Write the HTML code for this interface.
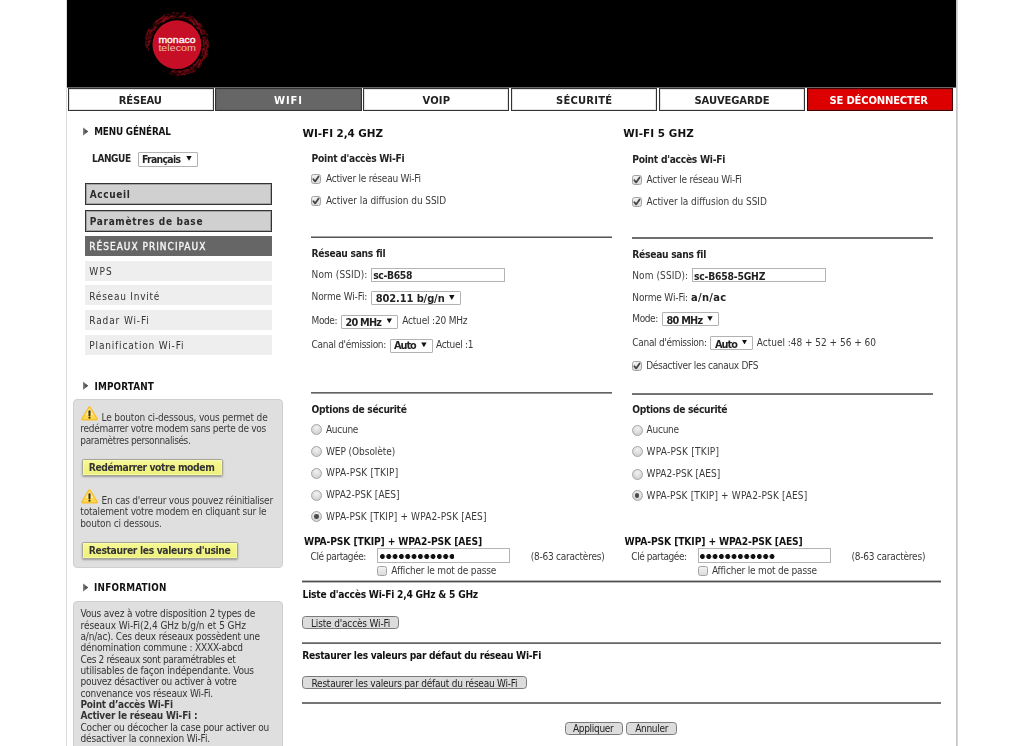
<!DOCTYPE html>
<html lang="fr">
<head>
<meta charset="utf-8">
<title>Monaco Telecom - WiFi</title>
<style>
html,body{margin:0;padding:0;background:#fff;}
body{width:1024px;height:746px;overflow:hidden;position:relative;font-family:'DejaVu Sans Condensed','Liberation Sans',sans-serif;font-size:10px;color:#333;}
#wrap{filter:blur(0.3px);position:absolute;left:0;top:0;width:1024px;height:746px;overflow:hidden;}
.abs,.t,.tab,.mi,.hr,.cb,.rd,.inp,.sel,.btn,.ybtn,.box,.tri,.warn{position:absolute;box-sizing:border-box;}
.t{display:block;height:14px;margin:0;padding:0;}
.semi{-webkit-text-stroke:0.35px #f6f6f6;}
#lborder{left:66px;top:0;width:1px;height:746px;background:#dcdcdc;}
#rborder{left:956px;top:0;width:2px;height:746px;background:linear-gradient(90deg,#c6c6c6 50%,#d6d6d6 50%);}
#header{left:67px;top:0;width:889px;height:87px;background:#000;}
#hline{left:67px;top:87px;width:889px;height:1px;background:#6a6a6a;}
.tab{top:88px;height:23px;width:146px;border:1px solid #333;background:#fff;box-shadow:inset 0 0 0 1px rgba(60,60,60,.14);}
.tab.on{background:#666;}
.tab.red{background:#dc0000;border-color:#400;}
.mi{left:85px;width:187px;height:22px;}
.mi.dark{background:#d0d0d0;border:1px solid #333;box-shadow:inset 0 0 0 1px rgba(60,60,60,.3);}
.mi.cur{background:#666;height:20px;}
.mi.lite{background:#eee;height:20px;}
.tri{width:5.6px;height:9px;left:82.6px;background:linear-gradient(90deg,#858585,#2e2e2e);clip-path:polygon(0 0,100% 50%,0 100%);}
.box{left:73px;width:210px;background:#dfdfdf;border:1px solid #cfcfcf;border-radius:4px;}
.ybtn{height:17px;background:linear-gradient(#f6f894,#eef07c);border:1px solid #a6a698;box-shadow:0 1px 2px rgba(0,0,0,.3),inset 0 0 0 1px rgba(255,255,200,.5);border-radius:1.5px;}
.hr{height:2px;}
.cb{width:10px;height:10px;border:1px solid #a2a2a2;border-radius:2.5px;background:linear-gradient(#f2f2f2,#dcdcdc);}
.cb.sm{width:10px;height:10px;}
.cb svg{position:absolute;left:0;top:0;width:8px;height:8px;}
.rd{width:11px;height:11px;border:1px solid #a4a4a4;border-radius:50%;background:radial-gradient(circle at 50% 30%,#f2f2f2,#c9c9c9);}
.rd.on:after{content:"";position:absolute;left:2.2px;top:2.2px;width:4.6px;height:4.6px;border-radius:50%;background:#4a4a4a;}
.inp{height:14px;background:#fff;border:1px solid #b4b4b4;}
.sel{height:14px;background:#fff;border:1px solid #b2b2b2;border-radius:1px;}
.sel:after{content:"";position:absolute;right:5.3px;top:2.9px;width:5.4px;height:4.8px;background:#111;clip-path:polygon(0 0,100% 0,50% 100%);}
.btn{height:13px;background:#dcdcdc;border:1px solid #7a7a7a;border-radius:3.5px;}
.dots{position:absolute;left:1.6px;top:4.6px;height:5px;width:74.7px;background:radial-gradient(circle at 2.5px 2.5px,#111 2.2px,rgba(0,0,0,0) 2.7px);background-size:6.34px 5px;}
</style>
</head>
<body>
<div id="wrap">
<div class="abs" id="lborder"></div>
<div class="abs" id="rborder"></div>
<div class="abs" id="header">
<svg class="abs" style="left:0;top:0" width="220" height="87" viewBox="0 0 220 87"><path d="M81.5 45.7 A28.4 28.4 0 1 1 105.9 72.8" fill="none" stroke="#6a0a13" stroke-width="3.0" stroke-opacity="0.36" stroke-dasharray="3 1.5 5 2 2 1 7 2"/><path d="M79.4 45.8 A30.5 30.5 0 1 1 105.7 74.9" fill="none" stroke="#6a0a13" stroke-width="1.8" stroke-opacity="0.26" stroke-dasharray="2 2 4 1.5 6 3 1.5 1"/><path d="M82.9 45.6 A27.0 27.0 0 1 1 106.1 71.4" fill="none" stroke="#6a0a13" stroke-width="1.0" stroke-opacity="0.3" stroke-dasharray="4 2 3 1.5"/><path d="M135.7 31.4 A29.0 29.0 0 0 1 136.2 34.5" fill="none" stroke="#7a0b15" stroke-width="1.1" stroke-opacity="0.71" stroke-linecap="round"/><path d="M131.9 59.5 A26.5 26.5 0 0 1 130.1 62.7" fill="none" stroke="#5e0910" stroke-width="0.6" stroke-opacity="0.89" stroke-linecap="round"/><path d="M94.6 22.5 A26.9 26.9 0 0 1 95.3 22.0" fill="none" stroke="#7a0b15" stroke-width="0.7" stroke-opacity="0.50" stroke-linecap="round"/><path d="M87.2 28.3 A28.0 28.0 0 0 1 89.8 26.6" fill="none" stroke="#8a0c18" stroke-width="0.8" stroke-opacity="0.55" stroke-linecap="round"/><path d="M95.4 21.1 A27.7 27.7 0 0 1 98.8 17.8" fill="none" stroke="#9a0f1c" stroke-width="1.4" stroke-opacity="0.75" stroke-linecap="round"/><path d="M111.2 18.6 A26.2 26.2 0 0 1 113.7 19.9" fill="none" stroke="#8a0c18" stroke-width="0.7" stroke-opacity="0.55" stroke-linecap="round"/><path d="M135.0 37.9 A26.0 26.0 0 0 1 136.5 39.1" fill="none" stroke="#5e0910" stroke-width="1.0" stroke-opacity="0.89" stroke-linecap="round"/><path d="M118.8 71.3 A28.0 28.0 0 0 1 116.6 70.5" fill="none" stroke="#7a0b15" stroke-width="1.0" stroke-opacity="0.86" stroke-linecap="round"/><path d="M110.5 71.1 A26.4 26.4 0 0 1 107.1 70.0" fill="none" stroke="#7a0b15" stroke-width="1.1" stroke-opacity="0.62" stroke-linecap="round"/><path d="M138.3 42.1 A28.5 28.5 0 0 1 138.1 44.3" fill="none" stroke="#9a0f1c" stroke-width="1.5" stroke-opacity="0.40" stroke-linecap="round"/><path d="M137.0 44.3 A27.1 27.1 0 0 1 137.0 48.7" fill="none" stroke="#7a0b15" stroke-width="1.1" stroke-opacity="0.42" stroke-linecap="round"/><path d="M116.9 74.5 A30.6 30.6 0 0 1 114.6 74.4" fill="none" stroke="#7a0b15" stroke-width="0.7" stroke-opacity="0.45" stroke-linecap="round"/><path d="M139.5 47.6 A29.7 29.7 0 0 1 139.6 49.0" fill="none" stroke="#5e0910" stroke-width="1.3" stroke-opacity="0.47" stroke-linecap="round"/><path d="M122.8 73.4 A31.5 31.5 0 0 1 118.6 74.2" fill="none" stroke="#7a0b15" stroke-width="0.8" stroke-opacity="0.77" stroke-linecap="round"/><path d="M98.8 18.0 A28.9 28.9 0 0 1 100.3 18.8" fill="none" stroke="#9a0f1c" stroke-width="0.7" stroke-opacity="0.66" stroke-linecap="round"/><path d="M87.7 29.3 A27.1 27.1 0 0 1 90.6 27.5" fill="none" stroke="#8a0c18" stroke-width="0.8" stroke-opacity="0.68" stroke-linecap="round"/><path d="M117.8 71.2 A27.6 27.6 0 0 1 115.2 70.6" fill="none" stroke="#7a0b15" stroke-width="0.8" stroke-opacity="0.58" stroke-linecap="round"/><path d="M133.9 60.4 A28.7 28.7 0 0 1 133.2 62.5" fill="none" stroke="#8a0c18" stroke-width="1.1" stroke-opacity="0.87" stroke-linecap="round"/><path d="M134.9 31.7 A28.1 28.1 0 0 1 134.5 34.0" fill="none" stroke="#8a0c18" stroke-width="1.1" stroke-opacity="0.44" stroke-linecap="round"/><path d="M106.0 12.9 A32.0 32.0 0 0 1 107.2 12.7" fill="none" stroke="#7a0b15" stroke-width="1.3" stroke-opacity="0.85" stroke-linecap="round"/><path d="M117.4 17.6 A28.1 28.1 0 0 1 121.0 17.7" fill="none" stroke="#8a0c18" stroke-width="1.4" stroke-opacity="0.61" stroke-linecap="round"/><path d="M129.4 22.2 A29.7 29.7 0 0 1 131.3 23.7" fill="none" stroke="#8a0c18" stroke-width="1.1" stroke-opacity="0.44" stroke-linecap="round"/><path d="M140.2 43.4 A30.4 30.4 0 0 1 140.9 45.9" fill="none" stroke="#8a0c18" stroke-width="1.1" stroke-opacity="0.62" stroke-linecap="round"/><path d="M82.2 41.4 A27.9 27.9 0 0 1 83.7 40.5" fill="none" stroke="#5e0910" stroke-width="1.5" stroke-opacity="0.46" stroke-linecap="round"/><path d="M108.9 72.5 A27.8 27.8 0 0 1 105.7 71.4" fill="none" stroke="#5e0910" stroke-width="0.8" stroke-opacity="0.85" stroke-linecap="round"/><path d="M81.5 45.0 A28.4 28.4 0 0 1 81.1 43.2" fill="none" stroke="#7a0b15" stroke-width="1.3" stroke-opacity="0.78" stroke-linecap="round"/><path d="M131.4 24.5 A29.5 29.5 0 0 1 132.0 26.8" fill="none" stroke="#8a0c18" stroke-width="1.0" stroke-opacity="0.82" stroke-linecap="round"/><path d="M103.2 17.9 A27.7 27.7 0 0 1 104.7 17.7" fill="none" stroke="#5e0910" stroke-width="0.8" stroke-opacity="0.51" stroke-linecap="round"/><path d="M95.3 17.3 A31.1 31.1 0 0 1 98.6 16.3" fill="none" stroke="#8a0c18" stroke-width="1.3" stroke-opacity="0.54" stroke-linecap="round"/><path d="M97.6 19.4 A28.1 28.1 0 0 1 100.6 18.0" fill="none" stroke="#7a0b15" stroke-width="1.2" stroke-opacity="0.60" stroke-linecap="round"/><path d="M137.0 48.9 A27.4 27.4 0 0 1 135.5 50.0" fill="none" stroke="#9a0f1c" stroke-width="1.2" stroke-opacity="0.62" stroke-linecap="round"/><path d="M136.2 37.7 A27.2 27.2 0 0 1 135.8 40.3" fill="none" stroke="#8a0c18" stroke-width="0.6" stroke-opacity="0.64" stroke-linecap="round"/><path d="M122.0 70.0 A28.1 28.1 0 0 1 118.9 71.4" fill="none" stroke="#5e0910" stroke-width="1.2" stroke-opacity="0.78" stroke-linecap="round"/><path d="M125.8 22.5 A27.3 27.3 0 0 1 128.3 23.0" fill="none" stroke="#7a0b15" stroke-width="0.9" stroke-opacity="0.63" stroke-linecap="round"/><path d="M90.0 24.6 A28.3 28.3 0 0 1 91.5 21.9" fill="none" stroke="#5e0910" stroke-width="1.3" stroke-opacity="0.87" stroke-linecap="round"/><path d="M134.9 62.6 A30.8 30.8 0 0 1 131.2 65.4" fill="none" stroke="#8a0c18" stroke-width="0.8" stroke-opacity="0.60" stroke-linecap="round"/><path d="M140.3 40.3 A30.7 30.7 0 0 1 141.7 42.4" fill="none" stroke="#8a0c18" stroke-width="1.4" stroke-opacity="0.57" stroke-linecap="round"/><path d="M137.7 51.3 A28.5 28.5 0 0 1 138.3 53.5" fill="none" stroke="#5e0910" stroke-width="0.8" stroke-opacity="0.83" stroke-linecap="round"/><path d="M118.5 18.1 A28.0 28.0 0 0 1 121.5 20.3" fill="none" stroke="#5e0910" stroke-width="0.7" stroke-opacity="0.66" stroke-linecap="round"/><path d="M139.8 34.1 A31.7 31.7 0 0 1 139.4 35.6" fill="none" stroke="#7a0b15" stroke-width="1.1" stroke-opacity="0.55" stroke-linecap="round"/><path d="M83.6 34.3 A28.3 28.3 0 0 1 84.3 30.2" fill="none" stroke="#9a0f1c" stroke-width="0.8" stroke-opacity="0.83" stroke-linecap="round"/><path d="M83.7 31.8 A29.2 29.2 0 0 1 84.8 29.2" fill="none" stroke="#5e0910" stroke-width="0.6" stroke-opacity="0.88" stroke-linecap="round"/><path d="M129.4 63.4 A27.0 27.0 0 0 1 126.2 66.0" fill="none" stroke="#5e0910" stroke-width="1.4" stroke-opacity="0.80" stroke-linecap="round"/><path d="M106.7 71.3 A26.8 26.8 0 0 1 104.2 71.8" fill="none" stroke="#9a0f1c" stroke-width="1.4" stroke-opacity="0.64" stroke-linecap="round"/><path d="M130.2 61.2 A26.2 26.2 0 0 1 129.5 62.9" fill="none" stroke="#7a0b15" stroke-width="1.5" stroke-opacity="0.42" stroke-linecap="round"/><path d="M113.9 72.3 A27.9 27.9 0 0 1 111.8 72.9" fill="none" stroke="#8a0c18" stroke-width="0.7" stroke-opacity="0.77" stroke-linecap="round"/><path d="M128.0 20.4 A30.3 30.3 0 0 1 131.5 22.0" fill="none" stroke="#7a0b15" stroke-width="0.6" stroke-opacity="0.72" stroke-linecap="round"/><path d="M83.2 38.9 A27.3 27.3 0 0 1 83.7 36.2" fill="none" stroke="#9a0f1c" stroke-width="0.7" stroke-opacity="0.86" stroke-linecap="round"/><path d="M132.7 28.7 A27.9 27.9 0 0 1 134.2 32.6" fill="none" stroke="#7a0b15" stroke-width="1.5" stroke-opacity="0.84" stroke-linecap="round"/><path d="M130.2 27.7 A26.5 26.5 0 0 1 131.4 29.5" fill="none" stroke="#7a0b15" stroke-width="1.4" stroke-opacity="0.67" stroke-linecap="round"/><path d="M119.3 74.0 A30.8 30.8 0 0 1 118.1 74.6" fill="none" stroke="#9a0f1c" stroke-width="0.9" stroke-opacity="0.81" stroke-linecap="round"/><path d="M132.8 65.0 A30.5 30.5 0 0 1 131.1 67.4" fill="none" stroke="#8a0c18" stroke-width="0.8" stroke-opacity="0.44" stroke-linecap="round"/><path d="M139.2 49.2 A29.7 29.7 0 0 1 138.2 53.5" fill="none" stroke="#7a0b15" stroke-width="0.8" stroke-opacity="0.46" stroke-linecap="round"/><path d="M126.8 18.1 A31.6 31.6 0 0 1 127.3 19.8" fill="none" stroke="#8a0c18" stroke-width="1.5" stroke-opacity="0.63" stroke-linecap="round"/><path d="M80.4 41.9 A29.6 29.6 0 0 1 80.0 40.9" fill="none" stroke="#5e0910" stroke-width="1.4" stroke-opacity="0.49" stroke-linecap="round"/><path d="M133.3 32.2 A26.6 26.6 0 0 1 134.3 35.6" fill="none" stroke="#5e0910" stroke-width="0.7" stroke-opacity="0.82" stroke-linecap="round"/><path d="M83.2 32.2 A29.5 29.5 0 0 1 83.5 29.9" fill="none" stroke="#7a0b15" stroke-width="0.9" stroke-opacity="0.46" stroke-linecap="round"/><path d="M122.3 15.9 A31.4 31.4 0 0 1 126.6 17.5" fill="none" stroke="#5e0910" stroke-width="1.3" stroke-opacity="0.78" stroke-linecap="round"/><path d="M118.1 74.4 A30.8 30.8 0 0 1 115.9 73.8" fill="none" stroke="#8a0c18" stroke-width="1.4" stroke-opacity="0.90" stroke-linecap="round"/><path d="M113.3 74.5 A30.0 30.0 0 0 1 111.1 75.1" fill="none" stroke="#5e0910" stroke-width="1.1" stroke-opacity="0.67" stroke-linecap="round"/><path d="M82.7 42.2 A27.3 27.3 0 0 1 83.2 41.0" fill="none" stroke="#8a0c18" stroke-width="1.1" stroke-opacity="0.46" stroke-linecap="round"/><path d="M107.9 16.4 A28.4 28.4 0 0 1 109.0 17.2" fill="none" stroke="#9a0f1c" stroke-width="0.9" stroke-opacity="0.45" stroke-linecap="round"/><path d="M105.2 73.6 A29.2 29.2 0 0 1 102.8 73.1" fill="none" stroke="#5e0910" stroke-width="1.4" stroke-opacity="0.45" stroke-linecap="round"/><path d="M120.7 17.2 A29.6 29.6 0 0 1 123.5 19.9" fill="none" stroke="#5e0910" stroke-width="1.4" stroke-opacity="0.48" stroke-linecap="round"/><path d="M138.6 39.2 A29.3 29.3 0 0 1 138.9 42.4" fill="none" stroke="#5e0910" stroke-width="1.0" stroke-opacity="0.54" stroke-linecap="round"/><path d="M87.3 28.7 A27.7 27.7 0 0 1 89.1 26.1" fill="none" stroke="#9a0f1c" stroke-width="0.9" stroke-opacity="0.76" stroke-linecap="round"/><path d="M139.0 49.7 A29.5 29.5 0 0 1 138.0 52.8" fill="none" stroke="#9a0f1c" stroke-width="1.2" stroke-opacity="0.43" stroke-linecap="round"/><path d="M109.6 12.8 A31.9 31.9 0 0 1 114.3 14.3" fill="none" stroke="#5e0910" stroke-width="1.4" stroke-opacity="0.61" stroke-linecap="round"/><path d="M139.5 53.4 A30.9 30.9 0 0 1 137.0 57.3" fill="none" stroke="#8a0c18" stroke-width="1.5" stroke-opacity="0.52" stroke-linecap="round"/><path d="M135.3 53.0 A26.7 26.7 0 0 1 133.5 56.3" fill="none" stroke="#7a0b15" stroke-width="0.7" stroke-opacity="0.58" stroke-linecap="round"/><path d="M96.3 20.7 A27.6 27.6 0 0 1 99.0 19.6" fill="none" stroke="#7a0b15" stroke-width="1.3" stroke-opacity="0.67" stroke-linecap="round"/><path d="M136.1 36.7 A27.4 27.4 0 0 1 137.5 37.6" fill="none" stroke="#9a0f1c" stroke-width="1.3" stroke-opacity="0.71" stroke-linecap="round"/><path d="M105.2 74.7 A30.4 30.4 0 0 1 101.9 73.1" fill="none" stroke="#7a0b15" stroke-width="0.9" stroke-opacity="0.52" stroke-linecap="round"/><path d="M119.8 72.8 A29.8 29.8 0 0 1 118.7 72.4" fill="none" stroke="#7a0b15" stroke-width="0.6" stroke-opacity="0.42" stroke-linecap="round"/><path d="M84.3 37.8 A26.5 26.5 0 0 1 85.1 34.8" fill="none" stroke="#5e0910" stroke-width="1.2" stroke-opacity="0.59" stroke-linecap="round"/><path d="M78.7 45.8 A31.2 31.2 0 0 1 79.0 41.6" fill="none" stroke="#7a0b15" stroke-width="1.3" stroke-opacity="0.82" stroke-linecap="round"/><path d="M126.8 69.0 A29.6 29.6 0 0 1 125.4 70.7" fill="none" stroke="#9a0f1c" stroke-width="1.3" stroke-opacity="0.49" stroke-linecap="round"/><path d="M85.5 31.1 A27.9 27.9 0 0 1 87.1 28.9" fill="none" stroke="#5e0910" stroke-width="1.1" stroke-opacity="0.81" stroke-linecap="round"/><path d="M136.5 58.5 A30.0 30.0 0 0 1 135.5 59.3" fill="none" stroke="#9a0f1c" stroke-width="1.3" stroke-opacity="0.75" stroke-linecap="round"/><path d="M131.9 24.4 A29.9 29.9 0 0 1 134.2 25.4" fill="none" stroke="#9a0f1c" stroke-width="0.9" stroke-opacity="0.62" stroke-linecap="round"/><path d="M132.1 27.4 A28.2 28.2 0 0 1 133.1 29.4" fill="none" stroke="#7a0b15" stroke-width="1.0" stroke-opacity="0.59" stroke-linecap="round"/><path d="M107.9 16.4 A28.3 28.3 0 0 1 109.3 16.1" fill="none" stroke="#5e0910" stroke-width="0.8" stroke-opacity="0.44" stroke-linecap="round"/><path d="M129.1 26.9 A26.1 26.1 0 0 1 130.8 28.8" fill="none" stroke="#5e0910" stroke-width="1.1" stroke-opacity="0.88" stroke-linecap="round"/><path d="M138.2 56.7 A30.7 30.7 0 0 1 136.6 57.4" fill="none" stroke="#8a0c18" stroke-width="1.3" stroke-opacity="0.85" stroke-linecap="round"/><path d="M136.1 49.0 A26.6 26.6 0 0 1 135.1 52.5" fill="none" stroke="#9a0f1c" stroke-width="1.2" stroke-opacity="0.64" stroke-linecap="round"/><path d="M112.5 16.8 A28.0 28.0 0 0 1 116.9 17.1" fill="none" stroke="#8a0c18" stroke-width="1.0" stroke-opacity="0.67" stroke-linecap="round"/><path d="M102.5 17.2 A28.5 28.5 0 0 1 106.3 16.0" fill="none" stroke="#8a0c18" stroke-width="1.4" stroke-opacity="0.80" stroke-linecap="round"/><path d="M132.7 25.5 A29.8 29.8 0 0 1 135.0 27.5" fill="none" stroke="#5e0910" stroke-width="1.3" stroke-opacity="0.61" stroke-linecap="round"/><path d="M133.2 31.1 A27.0 27.0 0 0 1 135.0 33.5" fill="none" stroke="#9a0f1c" stroke-width="0.9" stroke-opacity="0.59" stroke-linecap="round"/><path d="M136.6 30.0 A30.5 30.5 0 0 1 137.0 30.8" fill="none" stroke="#7a0b15" stroke-width="1.3" stroke-opacity="0.56" stroke-linecap="round"/><path d="M120.9 69.8 A27.4 27.4 0 0 1 117.8 71.2" fill="none" stroke="#9a0f1c" stroke-width="0.8" stroke-opacity="0.49" stroke-linecap="round"/><path d="M139.1 32.6 A31.7 31.7 0 0 1 141.2 35.3" fill="none" stroke="#9a0f1c" stroke-width="1.0" stroke-opacity="0.60" stroke-linecap="round"/><path d="M95.7 22.3 A26.6 26.6 0 0 1 99.1 20.7" fill="none" stroke="#5e0910" stroke-width="0.8" stroke-opacity="0.47" stroke-linecap="round"/><path d="M140.2 40.1 A30.6 30.6 0 0 1 139.3 44.2" fill="none" stroke="#5e0910" stroke-width="1.4" stroke-opacity="0.85" stroke-linecap="round"/><path d="M132.6 29.3 A27.5 27.5 0 0 1 134.8 30.8" fill="none" stroke="#7a0b15" stroke-width="1.0" stroke-opacity="0.79" stroke-linecap="round"/><path d="M139.1 43.4 A29.2 29.2 0 0 1 139.9 44.9" fill="none" stroke="#7a0b15" stroke-width="0.6" stroke-opacity="0.81" stroke-linecap="round"/><path d="M122.0 19.9 A27.6 27.6 0 0 1 124.3 22.5" fill="none" stroke="#9a0f1c" stroke-width="1.0" stroke-opacity="0.63" stroke-linecap="round"/><path d="M136.9 47.9 A27.2 27.2 0 0 1 137.1 51.3" fill="none" stroke="#5e0910" stroke-width="1.0" stroke-opacity="0.42" stroke-linecap="round"/><path d="M79.3 39.7 A31.0 31.0 0 0 1 80.3 37.7" fill="none" stroke="#5e0910" stroke-width="0.7" stroke-opacity="0.55" stroke-linecap="round"/><path d="M96.7 21.8 A26.4 26.4 0 0 1 97.7 20.7" fill="none" stroke="#8a0c18" stroke-width="1.2" stroke-opacity="0.77" stroke-linecap="round"/><path d="M93.9 21.4 A28.3 28.3 0 0 1 97.2 20.3" fill="none" stroke="#8a0c18" stroke-width="1.1" stroke-opacity="0.63" stroke-linecap="round"/><path d="M128.6 20.9 A30.3 30.3 0 0 1 131.2 24.5" fill="none" stroke="#9a0f1c" stroke-width="1.2" stroke-opacity="0.87" stroke-linecap="round"/><path d="M138.0 36.4 A29.3 29.3 0 0 1 137.5 37.7" fill="none" stroke="#9a0f1c" stroke-width="0.9" stroke-opacity="0.45" stroke-linecap="round"/><path d="M138.5 34.4 A30.3 30.3 0 0 1 140.0 36.3" fill="none" stroke="#8a0c18" stroke-width="0.7" stroke-opacity="0.47" stroke-linecap="round"/><path d="M128.3 64.6 A27.1 27.1 0 0 1 126.3 64.6" fill="none" stroke="#8a0c18" stroke-width="1.0" stroke-opacity="0.75" stroke-linecap="round"/><path d="M113.8 71.2 A26.7 26.7 0 0 1 111.5 70.2" fill="none" stroke="#7a0b15" stroke-width="1.4" stroke-opacity="0.61" stroke-linecap="round"/><path d="M91.3 20.0 A30.9 30.9 0 0 1 93.6 19.0" fill="none" stroke="#5e0910" stroke-width="1.0" stroke-opacity="0.41" stroke-linecap="round"/><path d="M86.6 24.7 A30.7 30.7 0 0 1 86.9 22.3" fill="none" stroke="#7a0b15" stroke-width="1.1" stroke-opacity="0.53" stroke-linecap="round"/><path d="M132.7 62.7 A29.1 29.1 0 0 1 130.8 66.2" fill="none" stroke="#9a0f1c" stroke-width="1.2" stroke-opacity="0.48" stroke-linecap="round"/><path d="M82.2 36.0 A29.0 29.0 0 0 1 82.1 34.5" fill="none" stroke="#7a0b15" stroke-width="1.5" stroke-opacity="0.66" stroke-linecap="round"/><path d="M82.6 32.4 A30.0 30.0 0 0 1 85.3 29.5" fill="none" stroke="#9a0f1c" stroke-width="1.0" stroke-opacity="0.61" stroke-linecap="round"/><path d="M129.0 63.5 A26.8 26.8 0 0 1 126.1 66.2" fill="none" stroke="#9a0f1c" stroke-width="1.1" stroke-opacity="0.68" stroke-linecap="round"/><path d="M125.3 72.1 A31.4 31.4 0 0 1 122.8 72.2" fill="none" stroke="#9a0f1c" stroke-width="1.4" stroke-opacity="0.40" stroke-linecap="round"/><path d="M111.7 75.6 A31.0 31.0 0 0 1 110.0 75.8" fill="none" stroke="#7a0b15" stroke-width="0.7" stroke-opacity="0.42" stroke-linecap="round"/><path d="M116.4 13.4 A32.0 32.0 0 0 1 118.1 13.0" fill="none" stroke="#8a0c18" stroke-width="1.4" stroke-opacity="0.85" stroke-linecap="round"/><path d="M124.1 66.7 A26.2 26.2 0 0 1 121.4 67.0" fill="none" stroke="#7a0b15" stroke-width="1.0" stroke-opacity="0.57" stroke-linecap="round"/><path d="M107.5 72.6 A28.0 28.0 0 0 1 104.6 70.9" fill="none" stroke="#5e0910" stroke-width="1.2" stroke-opacity="0.47" stroke-linecap="round"/><path d="M86.9 28.0 A28.5 28.5 0 0 1 88.5 25.1" fill="none" stroke="#5e0910" stroke-width="1.3" stroke-opacity="0.78" stroke-linecap="round"/><path d="M134.0 24.5 A31.4 31.4 0 0 1 137.0 27.1" fill="none" stroke="#9a0f1c" stroke-width="0.7" stroke-opacity="0.46" stroke-linecap="round"/><path d="M78.9 39.8 A31.4 31.4 0 0 1 80.5 37.9" fill="none" stroke="#5e0910" stroke-width="1.3" stroke-opacity="0.85" stroke-linecap="round"/><path d="M87.1 28.7 A27.8 27.8 0 0 1 89.9 27.1" fill="none" stroke="#5e0910" stroke-width="0.7" stroke-opacity="0.62" stroke-linecap="round"/><path d="M136.1 40.1 A26.6 26.6 0 0 1 136.7 44.1" fill="none" stroke="#8a0c18" stroke-width="1.2" stroke-opacity="0.87" stroke-linecap="round"/><path d="M141.1 44.6 A31.2 31.2 0 0 1 141.2 47.0" fill="none" stroke="#5e0910" stroke-width="1.1" stroke-opacity="0.48" stroke-linecap="round"/><path d="M131.7 60.2 A26.7 26.7 0 0 1 131.0 63.1" fill="none" stroke="#9a0f1c" stroke-width="0.6" stroke-opacity="0.52" stroke-linecap="round"/><path d="M138.2 49.0 A28.6 28.6 0 0 1 137.8 51.5" fill="none" stroke="#7a0b15" stroke-width="0.7" stroke-opacity="0.75" stroke-linecap="round"/><path d="M140.0 53.6 A31.4 31.4 0 0 1 139.3 55.7" fill="none" stroke="#5e0910" stroke-width="1.4" stroke-opacity="0.89" stroke-linecap="round"/><path d="M132.4 23.2 A31.2 31.2 0 0 1 133.9 26.8" fill="none" stroke="#5e0910" stroke-width="0.9" stroke-opacity="0.83" stroke-linecap="round"/><path d="M139.9 47.7 A30.2 30.2 0 0 1 139.6 50.8" fill="none" stroke="#8a0c18" stroke-width="0.8" stroke-opacity="0.87" stroke-linecap="round"/><path d="M91.8 19.7 A30.9 30.9 0 0 1 96.1 17.7" fill="none" stroke="#9a0f1c" stroke-width="1.0" stroke-opacity="0.84" stroke-linecap="round"/><path d="M100.3 17.7 A28.7 28.7 0 0 1 101.7 18.0" fill="none" stroke="#7a0b15" stroke-width="0.9" stroke-opacity="0.76" stroke-linecap="round"/><path d="M82.3 44.5 A27.6 27.6 0 0 1 82.5 40.7" fill="none" stroke="#9a0f1c" stroke-width="0.7" stroke-opacity="0.66" stroke-linecap="round"/><path d="M131.6 28.0 A27.4 27.4 0 0 1 132.7 28.8" fill="none" stroke="#8a0c18" stroke-width="1.0" stroke-opacity="0.44" stroke-linecap="round"/><path d="M80.9 39.0 A29.6 29.6 0 0 1 82.0 37.3" fill="none" stroke="#9a0f1c" stroke-width="1.3" stroke-opacity="0.44" stroke-linecap="round"/><path d="M136.9 42.7 A27.1 27.1 0 0 1 135.6 46.0" fill="none" stroke="#8a0c18" stroke-width="1.3" stroke-opacity="0.48" stroke-linecap="round"/><path d="M88.6 24.2 A29.5 29.5 0 0 1 88.5 22.8" fill="none" stroke="#9a0f1c" stroke-width="0.7" stroke-opacity="0.43" stroke-linecap="round"/><path d="M140.2 50.9 A31.0 31.0 0 0 1 140.6 54.7" fill="none" stroke="#7a0b15" stroke-width="1.3" stroke-opacity="0.67" stroke-linecap="round"/><path d="M132.8 64.1 A30.0 30.0 0 0 1 130.2 65.9" fill="none" stroke="#9a0f1c" stroke-width="1.2" stroke-opacity="0.76" stroke-linecap="round"/><path d="M80.5 46.7 A29.5 29.5 0 0 1 81.7 44.0" fill="none" stroke="#5e0910" stroke-width="1.1" stroke-opacity="0.76" stroke-linecap="round"/><path d="M128.7 25.4 A26.9 26.9 0 0 1 129.3 26.0" fill="none" stroke="#9a0f1c" stroke-width="1.0" stroke-opacity="0.62" stroke-linecap="round"/><path d="M126.5 23.8 A26.7 26.7 0 0 1 127.8 24.4" fill="none" stroke="#7a0b15" stroke-width="1.1" stroke-opacity="0.76" stroke-linecap="round"/><path d="M138.4 54.7 A30.2 30.2 0 0 1 137.3 58.8" fill="none" stroke="#5e0910" stroke-width="1.3" stroke-opacity="0.78" stroke-linecap="round"/><path d="M132.9 59.0 A27.0 27.0 0 0 1 131.1 59.8" fill="none" stroke="#5e0910" stroke-width="1.2" stroke-opacity="0.82" stroke-linecap="round"/><path d="M136.0 55.3 A28.2 28.2 0 0 1 136.6 57.3" fill="none" stroke="#7a0b15" stroke-width="0.6" stroke-opacity="0.64" stroke-linecap="round"/><path d="M128.6 68.7 A30.5 30.5 0 0 1 127.4 68.8" fill="none" stroke="#5e0910" stroke-width="1.4" stroke-opacity="0.47" stroke-linecap="round"/><path d="M80.2 33.8 A31.6 31.6 0 0 1 81.9 29.1" fill="none" stroke="#7a0b15" stroke-width="1.2" stroke-opacity="0.89" stroke-linecap="round"/><path d="M126.2 23.8 A26.5 26.5 0 0 1 127.1 25.2" fill="none" stroke="#7a0b15" stroke-width="1.5" stroke-opacity="0.86" stroke-linecap="round"/><path d="M138.9 52.1 A29.9 29.9 0 0 1 138.2 53.0" fill="none" stroke="#7a0b15" stroke-width="1.2" stroke-opacity="0.83" stroke-linecap="round"/><path d="M126.8 19.1 A30.7 30.7 0 0 1 128.0 20.5" fill="none" stroke="#7a0b15" stroke-width="0.8" stroke-opacity="0.67" stroke-linecap="round"/><path d="M80.6 48.4 A29.6 29.6 0 0 1 80.4 44.6" fill="none" stroke="#7a0b15" stroke-width="1.0" stroke-opacity="0.71" stroke-linecap="round"/><path d="M128.3 23.2 A28.3 28.3 0 0 1 129.5 23.6" fill="none" stroke="#8a0c18" stroke-width="0.9" stroke-opacity="0.54" stroke-linecap="round"/><path d="M94.2 23.2 A26.6 26.6 0 0 1 94.6 22.1" fill="none" stroke="#7a0b15" stroke-width="1.3" stroke-opacity="0.47" stroke-linecap="round"/><path d="M105.6 18.9 A26.1 26.1 0 0 1 107.5 19.0" fill="none" stroke="#9a0f1c" stroke-width="0.7" stroke-opacity="0.84" stroke-linecap="round"/><path d="M95.5 18.8 A29.6 29.6 0 0 1 98.3 18.4" fill="none" stroke="#7a0b15" stroke-width="1.1" stroke-opacity="0.46" stroke-linecap="round"/><path d="M80.8 36.4 A30.2 30.2 0 0 1 80.8 34.4" fill="none" stroke="#7a0b15" stroke-width="1.2" stroke-opacity="0.47" stroke-linecap="round"/><path d="M124.4 20.0 A28.7 28.7 0 0 1 125.6 20.6" fill="none" stroke="#9a0f1c" stroke-width="0.9" stroke-opacity="0.45" stroke-linecap="round"/><path d="M138.7 52.2 A29.8 29.8 0 0 1 138.6 55.5" fill="none" stroke="#8a0c18" stroke-width="1.5" stroke-opacity="0.55" stroke-linecap="round"/><path d="M136.2 30.0 A30.1 30.1 0 0 1 138.9 32.7" fill="none" stroke="#9a0f1c" stroke-width="1.4" stroke-opacity="0.52" stroke-linecap="round"/><path d="M133.9 59.9 A28.4 28.4 0 0 1 133.0 60.6" fill="none" stroke="#9a0f1c" stroke-width="0.9" stroke-opacity="0.65" stroke-linecap="round"/><path d="M114.7 71.5 A27.2 27.2 0 0 1 111.2 71.5" fill="none" stroke="#9a0f1c" stroke-width="1.2" stroke-opacity="0.66" stroke-linecap="round"/><path d="M134.0 28.9 A28.9 28.9 0 0 1 135.8 29.9" fill="none" stroke="#5e0910" stroke-width="0.9" stroke-opacity="0.86" stroke-linecap="round"/><path d="M132.8 66.3 A31.5 31.5 0 0 1 131.1 67.5" fill="none" stroke="#9a0f1c" stroke-width="1.4" stroke-opacity="0.55" stroke-linecap="round"/><path d="M129.7 27.5 A26.2 26.2 0 0 1 130.6 29.2" fill="none" stroke="#7a0b15" stroke-width="0.9" stroke-opacity="0.81" stroke-linecap="round"/><path d="M92.3 22.8 A28.0 28.0 0 0 1 96.4 21.6" fill="none" stroke="#8a0c18" stroke-width="1.2" stroke-opacity="0.51" stroke-linecap="round"/><path d="M90.1 24.3 A28.5 28.5 0 0 1 92.3 23.2" fill="none" stroke="#5e0910" stroke-width="1.3" stroke-opacity="0.84" stroke-linecap="round"/><path d="M140.0 38.2 A30.8 30.8 0 0 1 140.0 41.9" fill="none" stroke="#8a0c18" stroke-width="1.0" stroke-opacity="0.64" stroke-linecap="round"/><path d="M126.0 66.8 A27.4 27.4 0 0 1 122.9 67.9" fill="none" stroke="#5e0910" stroke-width="0.6" stroke-opacity="0.67" stroke-linecap="round"/><path d="M141.0 45.4 A31.1 31.1 0 0 1 139.5 49.2" fill="none" stroke="#9a0f1c" stroke-width="1.3" stroke-opacity="0.84" stroke-linecap="round"/><path d="M107.6 70.7 A26.1 26.1 0 0 1 104.3 69.4" fill="none" stroke="#7a0b15" stroke-width="1.0" stroke-opacity="0.48" stroke-linecap="round"/><path d="M123.3 18.2 A29.7 29.7 0 0 1 125.8 19.4" fill="none" stroke="#5e0910" stroke-width="0.9" stroke-opacity="0.54" stroke-linecap="round"/><path d="M112.2 72.6 A27.9 27.9 0 0 1 110.7 72.7" fill="none" stroke="#8a0c18" stroke-width="0.7" stroke-opacity="0.43" stroke-linecap="round"/><path d="M121.4 19.3 A27.9 27.9 0 0 1 124.9 21.2" fill="none" stroke="#5e0910" stroke-width="1.2" stroke-opacity="0.42" stroke-linecap="round"/><path d="M128.7 24.6 A27.5 27.5 0 0 1 131.2 26.0" fill="none" stroke="#9a0f1c" stroke-width="1.0" stroke-opacity="0.76" stroke-linecap="round"/><path d="M120.9 69.6 A27.2 27.2 0 0 1 118.0 69.6" fill="none" stroke="#7a0b15" stroke-width="1.5" stroke-opacity="0.72" stroke-linecap="round"/><path d="M87.8 23.2 A30.8 30.8 0 0 1 89.1 22.4" fill="none" stroke="#7a0b15" stroke-width="1.2" stroke-opacity="0.52" stroke-linecap="round"/><path d="M139.7 39.8 A30.2 30.2 0 0 1 141.2 43.7" fill="none" stroke="#9a0f1c" stroke-width="0.8" stroke-opacity="0.54" stroke-linecap="round"/><path d="M88.5 21.5 A31.6 31.6 0 0 1 93.1 19.4" fill="none" stroke="#8a0c18" stroke-width="1.2" stroke-opacity="0.46" stroke-linecap="round"/><path d="M120.0 72.1 A29.2 29.2 0 0 1 116.2 73.0" fill="none" stroke="#5e0910" stroke-width="1.4" stroke-opacity="0.82" stroke-linecap="round"/><path d="M123.5 69.9 A28.6 28.6 0 0 1 119.9 72.0" fill="none" stroke="#5e0910" stroke-width="0.8" stroke-opacity="0.76" stroke-linecap="round"/><path d="M112.6 16.5 A28.3 28.3 0 0 1 116.0 16.9" fill="none" stroke="#7a0b15" stroke-width="1.3" stroke-opacity="0.47" stroke-linecap="round"/><path d="M125.7 17.6 A31.4 31.4 0 0 1 129.3 20.3" fill="none" stroke="#9a0f1c" stroke-width="0.7" stroke-opacity="0.84" stroke-linecap="round"/><path d="M82.7 32.7 A29.8 29.8 0 0 1 84.2 31.3" fill="none" stroke="#9a0f1c" stroke-width="1.0" stroke-opacity="0.58" stroke-linecap="round"/><path d="M85.6 35.3 A26.0 26.0 0 0 1 86.6 32.0" fill="none" stroke="#7a0b15" stroke-width="0.6" stroke-opacity="0.57" stroke-linecap="round"/><path d="M141.1 44.1 A31.2 31.2 0 0 1 140.8 47.0" fill="none" stroke="#8a0c18" stroke-width="1.3" stroke-opacity="0.60" stroke-linecap="round"/><path d="M116.7 74.9 A31.0 31.0 0 0 1 114.6 74.4" fill="none" stroke="#5e0910" stroke-width="0.9" stroke-opacity="0.52" stroke-linecap="round"/><path d="M140.2 53.9 A31.7 31.7 0 0 1 139.6 57.1" fill="none" stroke="#9a0f1c" stroke-width="0.8" stroke-opacity="0.41" stroke-linecap="round"/><path d="M138.8 56.8 A31.3 31.3 0 0 1 138.0 57.7" fill="none" stroke="#7a0b15" stroke-width="1.3" stroke-opacity="0.53" stroke-linecap="round"/><path d="M117.4 17.3 A28.4 28.4 0 0 1 121.3 17.7" fill="none" stroke="#8a0c18" stroke-width="1.3" stroke-opacity="0.89" stroke-linecap="round"/><path d="M138.5 32.6 A31.0 31.0 0 0 1 140.4 34.6" fill="none" stroke="#7a0b15" stroke-width="1.2" stroke-opacity="0.40" stroke-linecap="round"/><path d="M113.9 72.6 A28.2 28.2 0 0 1 110.7 73.8" fill="none" stroke="#9a0f1c" stroke-width="0.9" stroke-opacity="0.72" stroke-linecap="round"/><path d="M98.5 72.4 A29.9 29.9 0 0 1 95.9 70.4" fill="none" stroke="#8a0c18" stroke-width="0.8" stroke-opacity="0.49" stroke-linecap="round"/><path d="M108.6 14.6 A30.1 30.1 0 0 1 110.2 15.7" fill="none" stroke="#5e0910" stroke-width="0.7" stroke-opacity="0.58" stroke-linecap="round"/><path d="M136.0 48.3 A26.3 26.3 0 0 1 137.0 49.7" fill="none" stroke="#8a0c18" stroke-width="1.4" stroke-opacity="0.78" stroke-linecap="round"/><path d="M132.2 23.9 A30.5 30.5 0 0 1 134.1 24.0" fill="none" stroke="#7a0b15" stroke-width="1.0" stroke-opacity="0.88" stroke-linecap="round"/><path d="M130.0 27.6 A26.4 26.4 0 0 1 132.3 28.6" fill="none" stroke="#8a0c18" stroke-width="1.4" stroke-opacity="0.79" stroke-linecap="round"/><path d="M126.8 67.4 A28.3 28.3 0 0 1 123.7 68.4" fill="none" stroke="#5e0910" stroke-width="1.2" stroke-opacity="0.84" stroke-linecap="round"/><path d="M132.6 64.5 A30.1 30.1 0 0 1 131.1 66.8" fill="none" stroke="#7a0b15" stroke-width="1.0" stroke-opacity="0.59" stroke-linecap="round"/><path d="M138.0 52.4 A29.2 29.2 0 0 1 136.7 54.7" fill="none" stroke="#9a0f1c" stroke-width="0.6" stroke-opacity="0.43" stroke-linecap="round"/><path d="M128.4 70.8 A32.0 32.0 0 0 1 124.7 72.4" fill="none" stroke="#5e0910" stroke-width="1.3" stroke-opacity="0.89" stroke-linecap="round"/><path d="M138.8 54.6 A30.5 30.5 0 0 1 136.1 58.2" fill="none" stroke="#7a0b15" stroke-width="0.8" stroke-opacity="0.86" stroke-linecap="round"/><path d="M123.8 19.2 A29.1 29.1 0 0 1 126.9 22.7" fill="none" stroke="#9a0f1c" stroke-width="1.4" stroke-opacity="0.76" stroke-linecap="round"/><path d="M82.8 41.7 A27.2 27.2 0 0 1 83.1 40.9" fill="none" stroke="#7a0b15" stroke-width="1.0" stroke-opacity="0.88" stroke-linecap="round"/><path d="M137.4 58.4 A30.7 30.7 0 0 1 135.4 60.5" fill="none" stroke="#8a0c18" stroke-width="1.3" stroke-opacity="0.83" stroke-linecap="round"/><path d="M118.1 17.7 A28.2 28.2 0 0 1 118.8 19.3" fill="none" stroke="#9a0f1c" stroke-width="0.9" stroke-opacity="0.83" stroke-linecap="round"/><path d="M130.9 63.8 A28.3 28.3 0 0 1 128.2 66.8" fill="none" stroke="#7a0b15" stroke-width="1.4" stroke-opacity="0.44" stroke-linecap="round"/><path d="M78.8 38.3 A31.7 31.7 0 0 1 80.0 33.5" fill="none" stroke="#9a0f1c" stroke-width="1.5" stroke-opacity="0.59" stroke-linecap="round"/><path d="M100.1 14.6 A31.7 31.7 0 0 1 103.8 14.5" fill="none" stroke="#7a0b15" stroke-width="0.8" stroke-opacity="0.78" stroke-linecap="round"/><path d="M100.6 19.6 A26.8 26.8 0 0 1 101.4 18.0" fill="none" stroke="#7a0b15" stroke-width="1.1" stroke-opacity="0.58" stroke-linecap="round"/><path d="M137.1 46.1 A27.2 27.2 0 0 1 137.7 49.6" fill="none" stroke="#8a0c18" stroke-width="1.3" stroke-opacity="0.50" stroke-linecap="round"/><path d="M88.9 22.0 A30.9 30.9 0 0 1 90.9 20.4" fill="none" stroke="#9a0f1c" stroke-width="1.1" stroke-opacity="0.87" stroke-linecap="round"/><path d="M81.1 42.2 A29.0 29.0 0 0 1 82.2 41.0" fill="none" stroke="#8a0c18" stroke-width="1.4" stroke-opacity="0.88" stroke-linecap="round"/><path d="M95.9 16.4 A31.6 31.6 0 0 1 97.9 14.7" fill="none" stroke="#8a0c18" stroke-width="1.1" stroke-opacity="0.62" stroke-linecap="round"/><path d="M107.0 70.6 A26.1 26.1 0 0 1 104.5 68.8" fill="none" stroke="#9a0f1c" stroke-width="0.9" stroke-opacity="0.70" stroke-linecap="round"/><path d="M134.4 63.0 A30.6 30.6 0 0 1 134.0 64.3" fill="none" stroke="#9a0f1c" stroke-width="1.0" stroke-opacity="0.50" stroke-linecap="round"/><path d="M139.3 47.7 A29.5 29.5 0 0 1 140.1 51.5" fill="none" stroke="#7a0b15" stroke-width="1.3" stroke-opacity="0.84" stroke-linecap="round"/><path d="M81.6 50.2 A28.8 28.8 0 0 1 80.9 48.3" fill="none" stroke="#8a0c18" stroke-width="1.1" stroke-opacity="0.89" stroke-linecap="round"/><path d="M140.8 43.3 A31.0 31.0 0 0 1 141.4 46.8" fill="none" stroke="#5e0910" stroke-width="1.5" stroke-opacity="0.43" stroke-linecap="round"/><path d="M92.3 18.4 A31.6 31.6 0 0 1 94.9 16.6" fill="none" stroke="#5e0910" stroke-width="1.0" stroke-opacity="0.82" stroke-linecap="round"/><path d="M131.3 59.5 A26.0 26.0 0 0 1 129.2 63.0" fill="none" stroke="#5e0910" stroke-width="1.3" stroke-opacity="0.85" stroke-linecap="round"/><path d="M114.6 16.3 A28.8 28.8 0 0 1 115.7 15.4" fill="none" stroke="#8a0c18" stroke-width="1.5" stroke-opacity="0.85" stroke-linecap="round"/><path d="M132.7 63.3 A29.4 29.4 0 0 1 130.0 67.2" fill="none" stroke="#8a0c18" stroke-width="0.7" stroke-opacity="0.90" stroke-linecap="round"/><path d="M137.2 57.1 A30.0 30.0 0 0 1 135.4 59.4" fill="none" stroke="#5e0910" stroke-width="0.9" stroke-opacity="0.52" stroke-linecap="round"/><path d="M87.3 30.6 A26.6 26.6 0 0 1 87.1 28.9" fill="none" stroke="#7a0b15" stroke-width="1.3" stroke-opacity="0.65" stroke-linecap="round"/><path d="M137.8 39.4 A28.4 28.4 0 0 1 139.3 42.4" fill="none" stroke="#8a0c18" stroke-width="1.5" stroke-opacity="0.61" stroke-linecap="round"/><path d="M113.4 71.1 A26.7 26.7 0 0 1 110.1 71.0" fill="none" stroke="#5e0910" stroke-width="0.9" stroke-opacity="0.71" stroke-linecap="round"/><path d="M134.4 65.0 A31.8 31.8 0 0 1 132.6 68.4" fill="none" stroke="#8a0c18" stroke-width="0.6" stroke-opacity="0.61" stroke-linecap="round"/><path d="M116.5 73.9 A29.9 29.9 0 0 1 114.2 75.5" fill="none" stroke="#7a0b15" stroke-width="0.8" stroke-opacity="0.90" stroke-linecap="round"/><path d="M81.3 31.7 A31.4 31.4 0 0 1 82.9 29.7" fill="none" stroke="#9a0f1c" stroke-width="1.3" stroke-opacity="0.53" stroke-linecap="round"/><path d="M134.3 59.0 A28.3 28.3 0 0 1 132.1 61.4" fill="none" stroke="#8a0c18" stroke-width="0.7" stroke-opacity="0.56" stroke-linecap="round"/><path d="M124.4 68.6 A27.9 27.9 0 0 1 121.2 70.8" fill="none" stroke="#9a0f1c" stroke-width="1.2" stroke-opacity="0.42" stroke-linecap="round"/><path d="M79.6 47.8 A30.5 30.5 0 0 1 80.8 44.9" fill="none" stroke="#8a0c18" stroke-width="1.0" stroke-opacity="0.88" stroke-linecap="round"/><path d="M99.4 19.3 A27.5 27.5 0 0 1 103.3 17.5" fill="none" stroke="#8a0c18" stroke-width="1.4" stroke-opacity="0.50" stroke-linecap="round"/><path d="M135.9 53.7 A27.5 27.5 0 0 1 136.0 55.7" fill="none" stroke="#5e0910" stroke-width="1.0" stroke-opacity="0.83" stroke-linecap="round"/><path d="M132.4 58.9 A26.6 26.6 0 0 1 130.5 60.2" fill="none" stroke="#7a0b15" stroke-width="0.8" stroke-opacity="0.42" stroke-linecap="round"/><path d="M122.5 17.6 A29.9 29.9 0 0 1 123.8 17.5" fill="none" stroke="#7a0b15" stroke-width="0.6" stroke-opacity="0.71" stroke-linecap="round"/><path d="M133.4 33.2 A26.1 26.1 0 0 1 135.5 36.6" fill="none" stroke="#5e0910" stroke-width="1.1" stroke-opacity="0.40" stroke-linecap="round"/><path d="M136.2 42.0 A26.4 26.4 0 0 1 136.2 45.5" fill="none" stroke="#5e0910" stroke-width="1.3" stroke-opacity="0.59" stroke-linecap="round"/><path d="M97.2 19.0 A28.7 28.7 0 0 1 100.9 16.8" fill="none" stroke="#9a0f1c" stroke-width="1.4" stroke-opacity="0.88" stroke-linecap="round"/><path d="M96.5 21.6 A26.7 26.7 0 0 1 97.8 21.5" fill="none" stroke="#7a0b15" stroke-width="1.5" stroke-opacity="0.68" stroke-linecap="round"/><path d="M131.9 60.1 A26.8 26.8 0 0 1 128.6 62.6" fill="none" stroke="#5e0910" stroke-width="0.8" stroke-opacity="0.60" stroke-linecap="round"/><path d="M137.3 31.9 A30.2 30.2 0 0 1 138.2 34.6" fill="none" stroke="#5e0910" stroke-width="1.3" stroke-opacity="0.66" stroke-linecap="round"/><path d="M131.2 61.3 A27.0 27.0 0 0 1 128.7 62.9" fill="none" stroke="#9a0f1c" stroke-width="0.9" stroke-opacity="0.48" stroke-linecap="round"/><path d="M98.0 17.7 A29.5 29.5 0 0 1 100.2 16.0" fill="none" stroke="#5e0910" stroke-width="0.7" stroke-opacity="0.75" stroke-linecap="round"/><path d="M113.0 74.9 A30.4 30.4 0 0 1 109.9 74.4" fill="none" stroke="#5e0910" stroke-width="0.7" stroke-opacity="0.81" stroke-linecap="round"/><path d="M111.2 76.1 A31.4 31.4 0 0 1 110.0 75.3" fill="none" stroke="#5e0910" stroke-width="1.0" stroke-opacity="0.67" stroke-linecap="round"/><path d="M79.5 47.2 A30.5 30.5 0 0 1 79.9 45.9" fill="none" stroke="#9a0f1c" stroke-width="1.4" stroke-opacity="0.42" stroke-linecap="round"/><path d="M96.4 68.2 L94.5 67.7" stroke="#000" stroke-width="1.0" stroke-opacity="0.54" stroke-linecap="round"/><path d="M115.8 17.8 L116.6 17.9" stroke="#000" stroke-width="0.9" stroke-opacity="0.55" stroke-linecap="round"/><path d="M112.7 15.0 L114.7 14.4" stroke="#000" stroke-width="0.9" stroke-opacity="0.66" stroke-linecap="round"/><path d="M139.2 35.4 L140.2 36.2" stroke="#000" stroke-width="0.9" stroke-opacity="0.62" stroke-linecap="round"/><path d="M110.0 71.0 L108.8 70.5" stroke="#000" stroke-width="0.7" stroke-opacity="0.61" stroke-linecap="round"/><path d="M129.7 66.2 L128.7 66.5" stroke="#000" stroke-width="0.7" stroke-opacity="0.73" stroke-linecap="round"/><path d="M129.0 25.3 L130.7 26.1" stroke="#000" stroke-width="0.9" stroke-opacity="0.74" stroke-linecap="round"/><path d="M106.9 15.3 L108.4 14.3" stroke="#000" stroke-width="1.0" stroke-opacity="0.62" stroke-linecap="round"/><path d="M140.1 55.4 L140.3 56.8" stroke="#000" stroke-width="0.6" stroke-opacity="0.70" stroke-linecap="round"/><path d="M88.8 67.1 L87.3 65.6" stroke="#000" stroke-width="0.8" stroke-opacity="0.66" stroke-linecap="round"/><path d="M113.5 76.7 L112.8 77.6" stroke="#000" stroke-width="0.9" stroke-opacity="0.53" stroke-linecap="round"/><path d="M131.8 29.2 L131.9 30.6" stroke="#000" stroke-width="1.1" stroke-opacity="0.64" stroke-linecap="round"/><path d="M128.4 25.6 L128.7 27.2" stroke="#000" stroke-width="0.5" stroke-opacity="0.76" stroke-linecap="round"/><path d="M140.2 41.4 L141.0 43.3" stroke="#000" stroke-width="0.8" stroke-opacity="0.53" stroke-linecap="round"/><path d="M82.9 40.1 L83.5 38.9" stroke="#000" stroke-width="0.8" stroke-opacity="0.59" stroke-linecap="round"/><path d="M101.9 17.0 L103.3 17.5" stroke="#000" stroke-width="0.8" stroke-opacity="0.75" stroke-linecap="round"/><path d="M139.2 39.6 L138.9 40.4" stroke="#000" stroke-width="0.7" stroke-opacity="0.82" stroke-linecap="round"/><path d="M139.9 32.6 L141.5 34.4" stroke="#000" stroke-width="1.0" stroke-opacity="0.92" stroke-linecap="round"/><path d="M138.9 48.4 L139.1 49.9" stroke="#000" stroke-width="0.9" stroke-opacity="0.78" stroke-linecap="round"/><path d="M134.3 33.8 L135.7 34.6" stroke="#000" stroke-width="0.5" stroke-opacity="0.55" stroke-linecap="round"/><path d="M131.8 21.1 L131.7 22.2" stroke="#000" stroke-width="1.0" stroke-opacity="0.81" stroke-linecap="round"/><path d="M80.3 41.0 L79.9 39.2" stroke="#000" stroke-width="0.5" stroke-opacity="0.53" stroke-linecap="round"/><path d="M118.8 13.6 L120.6 14.4" stroke="#000" stroke-width="0.7" stroke-opacity="0.66" stroke-linecap="round"/><path d="M140.8 47.6 L140.9 48.7" stroke="#000" stroke-width="0.8" stroke-opacity="0.65" stroke-linecap="round"/><path d="M96.7 18.8 L97.2 17.7" stroke="#000" stroke-width="0.6" stroke-opacity="0.57" stroke-linecap="round"/><path d="M109.3 73.9 L107.6 73.5" stroke="#000" stroke-width="0.6" stroke-opacity="0.79" stroke-linecap="round"/><path d="M108.0 74.1 L107.0 74.8" stroke="#000" stroke-width="0.6" stroke-opacity="0.60" stroke-linecap="round"/><path d="M100.9 71.5 L99.3 71.3" stroke="#000" stroke-width="1.0" stroke-opacity="0.74" stroke-linecap="round"/><path d="M137.2 59.4 L136.2 60.0" stroke="#000" stroke-width="0.7" stroke-opacity="0.95" stroke-linecap="round"/><path d="M90.3 65.3 L88.3 64.7" stroke="#000" stroke-width="0.7" stroke-opacity="0.56" stroke-linecap="round"/><path d="M117.6 14.5 L118.8 14.3" stroke="#000" stroke-width="0.7" stroke-opacity="0.63" stroke-linecap="round"/><path d="M84.2 27.6 L84.4 26.1" stroke="#000" stroke-width="0.5" stroke-opacity="0.72" stroke-linecap="round"/><path d="M90.5 62.9 L89.9 61.1" stroke="#000" stroke-width="0.6" stroke-opacity="0.90" stroke-linecap="round"/><path d="M141.0 36.8 L142.1 37.8" stroke="#000" stroke-width="0.6" stroke-opacity="0.82" stroke-linecap="round"/><path d="M135.7 35.5 L136.3 36.1" stroke="#000" stroke-width="1.0" stroke-opacity="0.83" stroke-linecap="round"/><path d="M137.5 35.6 L137.1 36.9" stroke="#000" stroke-width="0.7" stroke-opacity="0.92" stroke-linecap="round"/><path d="M134.5 56.6 L133.3 57.1" stroke="#000" stroke-width="0.7" stroke-opacity="0.58" stroke-linecap="round"/><path d="M131.1 65.3 L130.2 66.4" stroke="#000" stroke-width="1.0" stroke-opacity="0.74" stroke-linecap="round"/><path d="M135.2 36.0 L134.6 37.0" stroke="#000" stroke-width="0.7" stroke-opacity="0.84" stroke-linecap="round"/><path d="M136.0 31.2 L136.1 32.1" stroke="#000" stroke-width="0.8" stroke-opacity="0.63" stroke-linecap="round"/><path d="M118.5 13.5 L119.9 13.7" stroke="#000" stroke-width="1.0" stroke-opacity="0.71" stroke-linecap="round"/><path d="M121.6 74.6 L119.2 74.5" stroke="#000" stroke-width="1.0" stroke-opacity="0.68" stroke-linecap="round"/><path d="M135.7 53.4 L135.9 54.3" stroke="#000" stroke-width="0.6" stroke-opacity="0.51" stroke-linecap="round"/><path d="M115.8 75.4 L114.5 75.9" stroke="#000" stroke-width="0.8" stroke-opacity="0.58" stroke-linecap="round"/><path d="M137.9 47.4 L137.3 47.9" stroke="#000" stroke-width="0.9" stroke-opacity="0.67" stroke-linecap="round"/><path d="M80.2 49.8 L80.3 48.7" stroke="#000" stroke-width="1.0" stroke-opacity="0.76" stroke-linecap="round"/><path d="M84.2 59.5 L83.9 58.2" stroke="#000" stroke-width="1.0" stroke-opacity="0.61" stroke-linecap="round"/><path d="M138.9 32.3 L139.0 34.4" stroke="#000" stroke-width="0.8" stroke-opacity="0.94" stroke-linecap="round"/><path d="M103.3 71.2 L102.0 70.3" stroke="#000" stroke-width="0.9" stroke-opacity="0.57" stroke-linecap="round"/><path d="M136.4 35.6 L137.0 36.2" stroke="#000" stroke-width="0.7" stroke-opacity="0.75" stroke-linecap="round"/><path d="M77.9 45.3 L78.1 43.8" stroke="#000" stroke-width="0.5" stroke-opacity="0.72" stroke-linecap="round"/><path d="M106.3 74.3 L104.8 74.0" stroke="#000" stroke-width="0.6" stroke-opacity="0.72" stroke-linecap="round"/><path d="M79.9 48.2 L80.1 46.1" stroke="#000" stroke-width="0.8" stroke-opacity="0.54" stroke-linecap="round"/><path d="M118.4 18.4 L120.3 18.4" stroke="#000" stroke-width="0.7" stroke-opacity="0.91" stroke-linecap="round"/><path d="M81.0 44.0 L80.2 42.5" stroke="#000" stroke-width="0.8" stroke-opacity="0.72" stroke-linecap="round"/><path d="M101.9 75.2 L100.7 74.5" stroke="#000" stroke-width="0.6" stroke-opacity="0.60" stroke-linecap="round"/><path d="M125.7 17.7 L128.0 18.2" stroke="#000" stroke-width="0.9" stroke-opacity="0.86" stroke-linecap="round"/><path d="M102.4 14.3 L104.4 14.5" stroke="#000" stroke-width="1.0" stroke-opacity="0.64" stroke-linecap="round"/><path d="M111.1 76.7 L110.4 76.7" stroke="#000" stroke-width="0.7" stroke-opacity="0.86" stroke-linecap="round"/><path d="M85.4 24.3 L86.6 22.5" stroke="#000" stroke-width="0.5" stroke-opacity="0.80" stroke-linecap="round"/><path d="M134.9 65.2 L133.3 66.5" stroke="#000" stroke-width="0.6" stroke-opacity="0.81" stroke-linecap="round"/><path d="M111.6 12.3 L113.1 13.2" stroke="#000" stroke-width="0.9" stroke-opacity="0.53" stroke-linecap="round"/><path d="M130.8 21.8 L132.7 22.5" stroke="#000" stroke-width="0.8" stroke-opacity="0.92" stroke-linecap="round"/><path d="M91.1 22.2 L92.2 21.7" stroke="#000" stroke-width="0.5" stroke-opacity="0.57" stroke-linecap="round"/><path d="M117.7 18.2 L119.3 18.1" stroke="#000" stroke-width="0.9" stroke-opacity="0.73" stroke-linecap="round"/><path d="M98.7 70.3 L97.8 70.2" stroke="#000" stroke-width="0.9" stroke-opacity="0.92" stroke-linecap="round"/><path d="M94.4 72.7 L92.8 71.3" stroke="#000" stroke-width="1.1" stroke-opacity="0.78" stroke-linecap="round"/><path d="M140.1 37.5 L139.9 38.7" stroke="#000" stroke-width="0.8" stroke-opacity="0.72" stroke-linecap="round"/><path d="M140.8 51.7 L140.3 53.1" stroke="#000" stroke-width="0.9" stroke-opacity="0.61" stroke-linecap="round"/><path d="M119.3 73.1 L118.3 73.0" stroke="#000" stroke-width="0.5" stroke-opacity="0.52" stroke-linecap="round"/><path d="M91.8 68.0 L90.0 66.9" stroke="#000" stroke-width="0.7" stroke-opacity="0.68" stroke-linecap="round"/><path d="M112.6 73.8 L110.6 73.1" stroke="#000" stroke-width="0.8" stroke-opacity="0.81" stroke-linecap="round"/><path d="M112.2 15.1 L113.9 14.4" stroke="#000" stroke-width="1.0" stroke-opacity="0.61" stroke-linecap="round"/><path d="M78.5 36.4 L79.5 35.1" stroke="#000" stroke-width="1.0" stroke-opacity="0.53" stroke-linecap="round"/><path d="M127.3 68.7 L126.7 69.7" stroke="#000" stroke-width="0.9" stroke-opacity="0.64" stroke-linecap="round"/><path d="M113.1 14.6 L114.8 14.9" stroke="#000" stroke-width="0.8" stroke-opacity="0.55" stroke-linecap="round"/><path d="M78.1 49.8 L78.7 47.6" stroke="#000" stroke-width="0.5" stroke-opacity="0.62" stroke-linecap="round"/><path d="M100.0 17.5 L100.8 17.4" stroke="#000" stroke-width="0.8" stroke-opacity="0.83" stroke-linecap="round"/><path d="M85.1 62.0 L84.0 60.8" stroke="#000" stroke-width="0.5" stroke-opacity="0.82" stroke-linecap="round"/><path d="M128.2 63.9 L126.8 63.9" stroke="#000" stroke-width="0.5" stroke-opacity="0.68" stroke-linecap="round"/><circle cx="109.9" cy="44.7" r="25.3" fill="none" stroke="#000" stroke-width="1.1" stroke-opacity="0.8"/><circle cx="109.9" cy="44.7" r="24.4" fill="#c60f26"/><text x="91.4" y="42.9" font-family="'Liberation Sans',sans-serif" font-size="9.6" fill="#fff" stroke="#fff" stroke-width="0.3" textLength="37.1" lengthAdjust="spacingAndGlyphs">monaco</text><text x="91.4" y="50.7" font-family="'Liberation Sans',sans-serif" font-size="9.6" fill="#f1c0a8" textLength="37.5" lengthAdjust="spacingAndGlyphs">telecom</text></svg>
</div>
<div class="abs" id="hline"></div>

<!-- nav tabs -->
<div class="tab" style="left:68px"></div>
<div class="tab on" style="left:215px;width:147px"></div>
<div class="tab" style="left:363px"></div>
<div class="tab" style="left:511px"></div>
<div class="tab" style="left:659px"></div>
<div class="tab red" style="left:807px"></div>

<!-- sidebar -->
<div class="tri" style="top:127px"></div>
<div class="sel" style="left:138px;top:152px;width:60px;height:15px"></div>
<div class="mi dark" style="top:183px"></div>
<div class="mi dark" style="top:210px"></div>
<div class="mi cur" style="top:236px"></div>
<div class="mi lite" style="top:261px"></div>
<div class="mi lite" style="top:285px"></div>
<div class="mi lite" style="top:310px"></div>
<div class="mi lite" style="top:335px"></div>
<div class="tri" style="top:381.3px"></div>
<div class="box" style="top:399px;height:169px"></div>
<svg class="warn" style="left:80.5px;top:406.4px" width="17" height="15" viewBox="0 0 17 15"><path d="M8.5 1.9 L15.3 13.1 L1.7 13.1 Z" fill="#ffd84e" stroke="#f6c232" stroke-width="3" stroke-linejoin="round"/><path d="M8.5 2.6 L14.4 12.5 L2.6 12.5 Z" fill="#ffd84e" stroke="#ffd84e" stroke-width="1.2" stroke-linejoin="round"/><path d="M8.5 2.2 L12.6 9 L4.4 9 Z" fill="#fff3b8" fill-opacity="0.75"/><path d="M8.5 5.2 L8.5 9.2" stroke="#3f3210" stroke-width="2.1" stroke-linecap="round"/><circle cx="8.5" cy="11.7" r="1.1" fill="#3f3210"/></svg>
<svg class="warn" style="left:80.5px;top:488.9px" width="17" height="15" viewBox="0 0 17 15"><path d="M8.5 1.9 L15.3 13.1 L1.7 13.1 Z" fill="#ffd84e" stroke="#f6c232" stroke-width="3" stroke-linejoin="round"/><path d="M8.5 2.6 L14.4 12.5 L2.6 12.5 Z" fill="#ffd84e" stroke="#ffd84e" stroke-width="1.2" stroke-linejoin="round"/><path d="M8.5 2.2 L12.6 9 L4.4 9 Z" fill="#fff3b8" fill-opacity="0.75"/><path d="M8.5 5.2 L8.5 9.2" stroke="#3f3210" stroke-width="2.1" stroke-linecap="round"/><circle cx="8.5" cy="11.7" r="1.1" fill="#3f3210"/></svg>
<div class="ybtn" style="left:82px;top:459px;width:140.5px"></div>
<div class="ybtn" style="left:82px;top:542px;width:156px"></div>
<div class="tri" style="top:583.1px"></div>
<div class="box" style="top:601px;height:160px"></div>

<!-- main -->
<div class="cb" style="left:311.2px;top:174.0px"><svg viewBox="0 0 8 8"><path d="M1.4 4.3 L3.1 6.4 L6.6 1.4" fill="none" stroke="#444" stroke-width="1.8" stroke-linecap="round" stroke-linejoin="round"/></svg></div>
<div class="cb" style="left:311.2px;top:196.0px"><svg viewBox="0 0 8 8"><path d="M1.4 4.3 L3.1 6.4 L6.6 1.4" fill="none" stroke="#444" stroke-width="1.8" stroke-linecap="round" stroke-linejoin="round"/></svg></div>
<div class="hr" style="left:311.0px;top:236.0px;width:301.0px;height:2px;background:linear-gradient(#a5a5a5 50%,#555 50%)"></div>
<div class="inp" style="left:371.3px;top:267.5px;width:133.6px;height:14.2px"></div>
<div class="sel" style="left:371.3px;top:291.2px;width:89.5px;height:14.0px"></div>
<div class="sel" style="left:340.8px;top:314.6px;width:57.5px;height:14.2px"></div>
<div class="sel" style="left:389.6px;top:338.6px;width:43.3px;height:14.2px"></div>
<div class="hr" style="left:311.0px;top:392.0px;width:301.0px;height:2px;background:linear-gradient(#626262 50%,#9a9a9a 50%)"></div>
<div class="rd" style="left:311.0px;top:424.2px"></div>
<div class="rd" style="left:311.0px;top:445.8px"></div>
<div class="rd" style="left:311.0px;top:468.0px"></div>
<div class="rd" style="left:311.0px;top:489.6px"></div>
<div class="rd on" style="left:311.0px;top:511.2px"></div>
<div class="inp" style="left:377.0px;top:548.3px;width:133.2px;height:14.3px"><div class="dots"></div></div>
<div class="cb sm" style="left:377.0px;top:566.0px"></div>
<div class="cb" style="left:631.9px;top:175.0px"><svg viewBox="0 0 8 8"><path d="M1.4 4.3 L3.1 6.4 L6.6 1.4" fill="none" stroke="#444" stroke-width="1.8" stroke-linecap="round" stroke-linejoin="round"/></svg></div>
<div class="cb" style="left:631.9px;top:197.0px"><svg viewBox="0 0 8 8"><path d="M1.4 4.3 L3.1 6.4 L6.6 1.4" fill="none" stroke="#444" stroke-width="1.8" stroke-linecap="round" stroke-linejoin="round"/></svg></div>
<div class="hr" style="left:631.7px;top:237.0px;width:301.0px;height:2px;background:linear-gradient(#6e6e6e 50%,#6e6e6e 50%)"></div>
<div class="inp" style="left:692.0px;top:268.0px;width:133.6px;height:14.2px"></div>
<div class="sel" style="left:661.8px;top:312.3px;width:57.2px;height:14.2px"></div>
<div class="sel" style="left:710.3px;top:335.7px;width:43.2px;height:14.2px"></div>
<div class="cb" style="left:631.9px;top:361.0px"><svg viewBox="0 0 8 8"><path d="M1.4 4.3 L3.1 6.4 L6.6 1.4" fill="none" stroke="#444" stroke-width="1.8" stroke-linecap="round" stroke-linejoin="round"/></svg></div>
<div class="hr" style="left:631.7px;top:393.0px;width:301.0px;height:2px;background:linear-gradient(#787878 50%,#707070 50%)"></div>
<div class="rd" style="left:631.7px;top:424.9px"></div>
<div class="rd" style="left:631.7px;top:446.4px"></div>
<div class="rd" style="left:631.7px;top:468.7px"></div>
<div class="rd on" style="left:631.7px;top:490.3px"></div>
<div class="inp" style="left:697.7px;top:548.3px;width:133.2px;height:14.3px"><div class="dots"></div></div>
<div class="cb sm" style="left:697.7px;top:566.0px"></div>
<div class="hr" style="left:302.0px;top:580.0px;width:639.3px;height:3px;background:linear-gradient(#b8b8b8 33.3%,#505050 33.3%,#505050 66.6%,#b8b8b8 66.6%)"></div>
<div class="hr" style="left:302.0px;top:642.0px;width:639.3px;height:2px;background:linear-gradient(#8a8a8a 50%,#666 50%)"></div>
<div class="hr" style="left:302.0px;top:702.0px;width:639.3px;height:2px;background:linear-gradient(#757575 50%,#757575 50%)"></div>
<div class="btn" style="left:302.0px;top:616.0px;width:97.0px;height:13.0px"></div>
<div class="btn" style="left:302.0px;top:676.0px;width:225.2px;height:13.0px"></div>
<div class="btn" style="left:564.6px;top:722.0px;width:58.0px;height:13.0px"></div>
<div class="btn" style="left:626.1px;top:722.0px;width:50.6px;height:13.0px"></div>

<span class='t ' style="left:118.70px;top:93.95px;color:#222;font-family:'DejaVu Sans','Liberation Sans',sans-serif;font-size:10px;font-weight:bold;letter-spacing:-0.165px;line-height:14px;white-space:nowrap;">RÉSEAU</span>
<span class='t ' style="left:274.00px;top:93.95px;color:#fff;font-family:'DejaVu Sans','Liberation Sans',sans-serif;font-size:10px;font-weight:bold;letter-spacing:0.896px;line-height:14px;white-space:nowrap;">WIFI</span>
<span class='t ' style="left:422.50px;top:93.95px;color:#222;font-family:'DejaVu Sans','Liberation Sans',sans-serif;font-size:10px;font-weight:bold;letter-spacing:0.125px;line-height:14px;white-space:nowrap;">VOIP</span>
<span class='t ' style="left:556.00px;top:93.95px;color:#222;font-family:'DejaVu Sans','Liberation Sans',sans-serif;font-size:10px;font-weight:bold;letter-spacing:0.203px;line-height:14px;white-space:nowrap;">SÉCURITÉ</span>
<span class='t ' style="left:694.50px;top:93.95px;color:#222;font-family:'DejaVu Sans','Liberation Sans',sans-serif;font-size:10px;font-weight:bold;letter-spacing:-0.123px;line-height:14px;white-space:nowrap;">SAUVEGARDE</span>
<span class='t ' style="left:829.50px;top:93.95px;color:#fff;font-family:'DejaVu Sans','Liberation Sans',sans-serif;font-size:10px;font-weight:bold;letter-spacing:-0.173px;line-height:14px;white-space:nowrap;">SE DÉCONNECTER</span>
<span class='t ' style="left:94.20px;top:125.15px;color:#111;font-family:'DejaVu Sans Condensed','Liberation Sans',sans-serif;font-size:9.8px;font-weight:bold;letter-spacing:-0.144px;line-height:14px;white-space:nowrap;">MENU GÉNÉRAL</span>
<span class='t ' style="left:92.10px;top:152.25px;color:#222;font-family:'DejaVu Sans Condensed','Liberation Sans',sans-serif;font-size:10px;font-weight:bold;letter-spacing:-0.412px;line-height:14px;white-space:nowrap;">LANGUE</span>
<span class='t ' style="left:142.00px;top:151.85px;color:#222;font-family:'DejaVu Sans Condensed','Liberation Sans',sans-serif;font-size:10.4px;font-weight:bold;letter-spacing:-0.703px;line-height:14px;white-space:nowrap;">Français</span>
<span class='t ' style="left:89.80px;top:188.45px;color:#2a2a2a;font-family:'DejaVu Sans Condensed','Liberation Sans',sans-serif;font-size:10px;font-weight:bold;letter-spacing:0.615px;line-height:14px;white-space:nowrap;">Accueil</span>
<span class='t ' style="left:89.80px;top:215.35px;color:#2a2a2a;font-family:'DejaVu Sans Condensed','Liberation Sans',sans-serif;font-size:10px;font-weight:bold;letter-spacing:0.667px;line-height:14px;white-space:nowrap;">Paramètres de base</span>
<span class='t semi' style="left:89.30px;top:240.05px;color:#f6f6f6;font-family:'DejaVu Sans Condensed','Liberation Sans',sans-serif;font-size:10px;font-weight:normal;letter-spacing:1.014px;line-height:14px;white-space:nowrap;">RÉSEAUX PRINCIPAUX</span>
<span class='t ' style="left:89.30px;top:264.85px;color:#333;font-family:'DejaVu Sans Condensed','Liberation Sans',sans-serif;font-size:10px;font-weight:normal;letter-spacing:1.227px;line-height:14px;white-space:nowrap;">WPS</span>
<span class='t ' style="left:89.30px;top:289.55px;color:#333;font-family:'DejaVu Sans Condensed','Liberation Sans',sans-serif;font-size:10px;font-weight:normal;letter-spacing:0.760px;line-height:14px;white-space:nowrap;">Réseau Invité</span>
<span class='t ' style="left:89.30px;top:314.25px;color:#333;font-family:'DejaVu Sans Condensed','Liberation Sans',sans-serif;font-size:10px;font-weight:normal;letter-spacing:0.880px;line-height:14px;white-space:nowrap;">Radar Wi-Fi</span>
<span class='t ' style="left:89.30px;top:338.95px;color:#333;font-family:'DejaVu Sans Condensed','Liberation Sans',sans-serif;font-size:10px;font-weight:normal;letter-spacing:0.831px;line-height:14px;white-space:nowrap;">Planification Wi-Fi</span>
<span class='t ' style="left:94.50px;top:380.05px;color:#111;font-family:'DejaVu Sans Condensed','Liberation Sans',sans-serif;font-size:9.9px;font-weight:bold;letter-spacing:0.140px;line-height:14px;white-space:nowrap;">IMPORTANT</span>
<span class='t ' style="left:94.10px;top:581.35px;color:#111;font-family:'DejaVu Sans Condensed','Liberation Sans',sans-serif;font-size:9.8px;font-weight:bold;letter-spacing:0.235px;line-height:14px;white-space:nowrap;">INFORMATION</span>
<span class='t ' style="left:101.60px;top:410.95px;color:#3a3a3a;font-family:'DejaVu Sans Condensed','Liberation Sans',sans-serif;font-size:10px;font-weight:normal;letter-spacing:-0.153px;line-height:14px;white-space:nowrap;">Le bouton ci-dessous, vous permet de</span>
<span class='t ' style="left:80.30px;top:422.45px;color:#3a3a3a;font-family:'DejaVu Sans Condensed','Liberation Sans',sans-serif;font-size:10px;font-weight:normal;letter-spacing:-0.283px;line-height:14px;white-space:nowrap;">redémarrer votre modem sans perte de vos</span>
<span class='t ' style="left:80.30px;top:433.95px;color:#3a3a3a;font-family:'DejaVu Sans Condensed','Liberation Sans',sans-serif;font-size:10px;font-weight:normal;letter-spacing:-0.382px;line-height:14px;white-space:nowrap;">paramètres personnalisés.</span>
<span class='t ' style="left:88.70px;top:460.15px;color:#333;font-family:'DejaVu Sans Condensed','Liberation Sans',sans-serif;font-size:10.3px;font-weight:bold;letter-spacing:-0.422px;line-height:14px;white-space:nowrap;">Redémarrer votre modem</span>
<span class='t ' style="left:101.60px;top:493.55px;color:#3a3a3a;font-family:'DejaVu Sans Condensed','Liberation Sans',sans-serif;font-size:10px;font-weight:normal;letter-spacing:-0.222px;line-height:14px;white-space:nowrap;">En cas d&#x27;erreur vous pouvez réinitialiser</span>
<span class='t ' style="left:80.30px;top:504.95px;color:#3a3a3a;font-family:'DejaVu Sans Condensed','Liberation Sans',sans-serif;font-size:10px;font-weight:normal;letter-spacing:-0.192px;line-height:14px;white-space:nowrap;">totalement votre modem en cliquant sur le</span>
<span class='t ' style="left:80.30px;top:517.05px;color:#3a3a3a;font-family:'DejaVu Sans Condensed','Liberation Sans',sans-serif;font-size:10px;font-weight:normal;letter-spacing:-0.158px;line-height:14px;white-space:nowrap;">bouton ci dessous.</span>
<span class='t ' style="left:88.70px;top:542.75px;color:#333;font-family:'DejaVu Sans Condensed','Liberation Sans',sans-serif;font-size:10.3px;font-weight:bold;letter-spacing:-0.362px;line-height:14px;white-space:nowrap;">Restaurer les valeurs d&#x27;usine</span>
<span class='t ' style="left:80.50px;top:607.45px;color:#333;font-family:'DejaVu Sans Condensed','Liberation Sans',sans-serif;font-size:10px;font-weight:normal;letter-spacing:-0.170px;line-height:14px;white-space:nowrap;">Vous avez à votre disposition 2 types de</span>
<span class='t ' style="left:80.50px;top:618.78px;color:#333;font-family:'DejaVu Sans Condensed','Liberation Sans',sans-serif;font-size:10px;font-weight:normal;letter-spacing:-0.043px;line-height:14px;white-space:nowrap;">réseaux Wi-Fi(2,4 GHz b/g/n et 5 GHz</span>
<span class='t ' style="left:80.50px;top:630.11px;color:#333;font-family:'DejaVu Sans Condensed','Liberation Sans',sans-serif;font-size:10px;font-weight:normal;letter-spacing:-0.182px;line-height:14px;white-space:nowrap;">a/n/ac). Ces deux réseaux possèdent une</span>
<span class='t ' style="left:80.50px;top:641.44px;color:#333;font-family:'DejaVu Sans Condensed','Liberation Sans',sans-serif;font-size:10px;font-weight:normal;letter-spacing:-0.180px;line-height:14px;white-space:nowrap;">dénomination commune : XXXX-abcd</span>
<span class='t ' style="left:80.50px;top:652.77px;color:#333;font-family:'DejaVu Sans Condensed','Liberation Sans',sans-serif;font-size:10px;font-weight:normal;letter-spacing:-0.335px;line-height:14px;white-space:nowrap;">Ces 2 réseaux sont paramétrables et</span>
<span class='t ' style="left:80.50px;top:664.10px;color:#333;font-family:'DejaVu Sans Condensed','Liberation Sans',sans-serif;font-size:10px;font-weight:normal;letter-spacing:-0.155px;line-height:14px;white-space:nowrap;">utilisables de façon indépendante. Vous</span>
<span class='t ' style="left:80.50px;top:675.43px;color:#333;font-family:'DejaVu Sans Condensed','Liberation Sans',sans-serif;font-size:10px;font-weight:normal;letter-spacing:-0.245px;line-height:14px;white-space:nowrap;">pouvez désactiver ou activer à votre</span>
<span class='t ' style="left:80.50px;top:686.76px;color:#333;font-family:'DejaVu Sans Condensed','Liberation Sans',sans-serif;font-size:10px;font-weight:normal;letter-spacing:-0.208px;line-height:14px;white-space:nowrap;">convenance vos réseaux Wi-Fi.</span>
<span class='t ' style="left:80.50px;top:698.09px;color:#333;font-family:'DejaVu Sans Condensed','Liberation Sans',sans-serif;font-size:10px;font-weight:bold;letter-spacing:-0.242px;line-height:14px;white-space:nowrap;">Point d’accès Wi-Fi</span>
<span class='t ' style="left:80.50px;top:709.42px;color:#333;font-family:'DejaVu Sans Condensed','Liberation Sans',sans-serif;font-size:10px;font-weight:bold;letter-spacing:-0.202px;line-height:14px;white-space:nowrap;">Activer le réseau Wi-Fi :</span>
<span class='t ' style="left:80.50px;top:720.75px;color:#333;font-family:'DejaVu Sans Condensed','Liberation Sans',sans-serif;font-size:10px;font-weight:normal;letter-spacing:-0.176px;line-height:14px;white-space:nowrap;">Cocher ou décocher la case pour activer ou</span>
<span class='t ' style="left:80.50px;top:732.08px;color:#333;font-family:'DejaVu Sans Condensed','Liberation Sans',sans-serif;font-size:10px;font-weight:normal;letter-spacing:-0.153px;line-height:14px;white-space:nowrap;">désactiver la connexion Wi-Fi.</span>
<span class='t ' style="left:80.50px;top:744.41px;color:#333;font-family:'DejaVu Sans Condensed','Liberation Sans',sans-serif;font-size:10px;font-weight:bold;letter-spacing:-0.058px;line-height:14px;white-space:nowrap;">Afficher le mot de passe :</span>
<span class='t ' style="left:302.60px;top:126.15px;color:#111;font-family:'DejaVu Sans','Liberation Sans',sans-serif;font-size:10.4px;font-weight:bold;letter-spacing:-0.051px;line-height:14px;white-space:nowrap;">WI-FI 2,4 GHZ</span>
<span class='t ' style="left:311.60px;top:152.35px;color:#222;font-family:'DejaVu Sans Condensed','Liberation Sans',sans-serif;font-size:10.2px;font-weight:bold;letter-spacing:-0.278px;line-height:14px;white-space:nowrap;">Point d&#x27;accès Wi-Fi</span>
<span class='t ' style="left:325.90px;top:172.25px;color:#3a3a3a;font-family:'DejaVu Sans Condensed','Liberation Sans',sans-serif;font-size:10px;font-weight:normal;letter-spacing:-0.215px;line-height:14px;white-space:nowrap;">Activer le réseau Wi-Fi</span>
<span class='t ' style="left:325.90px;top:194.25px;color:#3a3a3a;font-family:'DejaVu Sans Condensed','Liberation Sans',sans-serif;font-size:10px;font-weight:normal;letter-spacing:-0.066px;line-height:14px;white-space:nowrap;">Activer la diffusion du SSID</span>
<span class='t ' style="left:311.60px;top:247.05px;color:#222;font-family:'DejaVu Sans Condensed','Liberation Sans',sans-serif;font-size:10.2px;font-weight:bold;letter-spacing:-0.279px;line-height:14px;white-space:nowrap;">Réseau sans fil</span>
<span class='t ' style="left:311.60px;top:267.95px;color:#3a3a3a;font-family:'DejaVu Sans Condensed','Liberation Sans',sans-serif;font-size:10px;font-weight:normal;letter-spacing:0.088px;line-height:14px;white-space:nowrap;">Nom (SSID):</span>
<span class='t ' style="left:373.20px;top:268.05px;color:#222;font-family:'DejaVu Sans Condensed','Liberation Sans',sans-serif;font-size:10.3px;font-weight:bold;letter-spacing:-0.342px;line-height:14px;white-space:nowrap;">sc-B658</span>
<span class='t ' style="left:311.60px;top:290.35px;color:#3a3a3a;font-family:'DejaVu Sans Condensed','Liberation Sans',sans-serif;font-size:10px;font-weight:normal;letter-spacing:-0.139px;line-height:14px;white-space:nowrap;">Norme Wi-Fi:</span>
<span class='t ' style="left:375.70px;top:291.55px;color:#222;font-family:'DejaVu Sans Condensed','Liberation Sans',sans-serif;font-size:11px;font-weight:bold;letter-spacing:-0.098px;line-height:14px;white-space:nowrap;">802.11 b/g/n</span>
<span class='t ' style="left:311.60px;top:314.25px;color:#3a3a3a;font-family:'DejaVu Sans Condensed','Liberation Sans',sans-serif;font-size:10px;font-weight:normal;letter-spacing:-0.416px;line-height:14px;white-space:nowrap;">Mode:</span>
<span class='t ' style="left:345.40px;top:315.75px;color:#222;font-family:'DejaVu Sans Condensed','Liberation Sans',sans-serif;font-size:10.8px;font-weight:bold;letter-spacing:-0.752px;line-height:14px;white-space:nowrap;">20 MHz</span>
<span class='t ' style="left:402.20px;top:314.25px;color:#3a3a3a;font-family:'DejaVu Sans Condensed','Liberation Sans',sans-serif;font-size:10px;font-weight:normal;letter-spacing:-0.172px;line-height:14px;white-space:nowrap;">Actuel :20 MHz</span>
<span class='t ' style="left:311.60px;top:337.55px;color:#3a3a3a;font-family:'DejaVu Sans Condensed','Liberation Sans',sans-serif;font-size:10px;font-weight:normal;letter-spacing:-0.298px;line-height:14px;white-space:nowrap;">Canal d&#x27;émission:</span>
<span class='t ' style="left:393.90px;top:338.85px;color:#222;font-family:'DejaVu Sans Condensed','Liberation Sans',sans-serif;font-size:10.8px;font-weight:bold;letter-spacing:-0.955px;line-height:14px;white-space:nowrap;">Auto</span>
<span class='t ' style="left:436.00px;top:337.55px;color:#3a3a3a;font-family:'DejaVu Sans Condensed','Liberation Sans',sans-serif;font-size:10px;font-weight:normal;letter-spacing:-0.277px;line-height:14px;white-space:nowrap;">Actuel :1</span>
<span class='t ' style="left:311.60px;top:402.75px;color:#222;font-family:'DejaVu Sans Condensed','Liberation Sans',sans-serif;font-size:10.2px;font-weight:bold;letter-spacing:-0.329px;line-height:14px;white-space:nowrap;">Options de sécurité</span>
<span class='t ' style="left:325.90px;top:422.75px;color:#3a3a3a;font-family:'DejaVu Sans Condensed','Liberation Sans',sans-serif;font-size:10px;font-weight:normal;letter-spacing:-0.250px;line-height:14px;white-space:nowrap;">Aucune</span>
<span class='t ' style="left:325.90px;top:444.60px;color:#3a3a3a;font-family:'DejaVu Sans Condensed','Liberation Sans',sans-serif;font-size:10px;font-weight:normal;letter-spacing:-0.044px;line-height:14px;white-space:nowrap;">WEP (Obsolète)</span>
<span class='t ' style="left:325.90px;top:466.45px;color:#3a3a3a;font-family:'DejaVu Sans Condensed','Liberation Sans',sans-serif;font-size:10px;font-weight:normal;letter-spacing:0.242px;line-height:14px;white-space:nowrap;">WPA-PSK [TKIP]</span>
<span class='t ' style="left:325.90px;top:488.30px;color:#3a3a3a;font-family:'DejaVu Sans Condensed','Liberation Sans',sans-serif;font-size:10px;font-weight:normal;letter-spacing:0.032px;line-height:14px;white-space:nowrap;">WPA2-PSK [AES]</span>
<span class='t ' style="left:325.90px;top:510.15px;color:#3a3a3a;font-family:'DejaVu Sans Condensed','Liberation Sans',sans-serif;font-size:10px;font-weight:normal;letter-spacing:0.161px;line-height:14px;white-space:nowrap;">WPA-PSK [TKIP] + WPA2-PSK [AES]</span>
<span class='t ' style="left:303.90px;top:534.85px;color:#111;font-family:'DejaVu Sans Condensed','Liberation Sans',sans-serif;font-size:10.2px;font-weight:bold;letter-spacing:-0.108px;line-height:14px;white-space:nowrap;">WPA-PSK [TKIP] + WPA2-PSK [AES]</span>
<span class='t ' style="left:310.60px;top:550.05px;color:#3a3a3a;font-family:'DejaVu Sans Condensed','Liberation Sans',sans-serif;font-size:10px;font-weight:normal;letter-spacing:-0.431px;line-height:14px;white-space:nowrap;">Clé partagée:</span>
<span class='t ' style="left:530.70px;top:550.05px;color:#3a3a3a;font-family:'DejaVu Sans Condensed','Liberation Sans',sans-serif;font-size:10px;font-weight:normal;letter-spacing:-0.229px;line-height:14px;white-space:nowrap;">(8-63 caractères)</span>
<span class='t ' style="left:391.30px;top:563.65px;color:#3a3a3a;font-family:'DejaVu Sans Condensed','Liberation Sans',sans-serif;font-size:10px;font-weight:normal;letter-spacing:-0.182px;line-height:14px;white-space:nowrap;">Afficher le mot de passe</span>
<span class='t ' style="left:623.30px;top:126.15px;color:#111;font-family:'DejaVu Sans','Liberation Sans',sans-serif;font-size:10.4px;font-weight:bold;letter-spacing:0.057px;line-height:14px;white-space:nowrap;">WI-FI 5 GHZ</span>
<span class='t ' style="left:632.30px;top:153.15px;color:#222;font-family:'DejaVu Sans Condensed','Liberation Sans',sans-serif;font-size:10.2px;font-weight:bold;letter-spacing:-0.278px;line-height:14px;white-space:nowrap;">Point d&#x27;accès Wi-Fi</span>
<span class='t ' style="left:646.60px;top:173.05px;color:#3a3a3a;font-family:'DejaVu Sans Condensed','Liberation Sans',sans-serif;font-size:10px;font-weight:normal;letter-spacing:-0.215px;line-height:14px;white-space:nowrap;">Activer le réseau Wi-Fi</span>
<span class='t ' style="left:646.60px;top:195.05px;color:#3a3a3a;font-family:'DejaVu Sans Condensed','Liberation Sans',sans-serif;font-size:10px;font-weight:normal;letter-spacing:-0.066px;line-height:14px;white-space:nowrap;">Activer la diffusion du SSID</span>
<span class='t ' style="left:632.30px;top:247.53px;color:#222;font-family:'DejaVu Sans Condensed','Liberation Sans',sans-serif;font-size:10.2px;font-weight:bold;letter-spacing:-0.279px;line-height:14px;white-space:nowrap;">Réseau sans fil</span>
<span class='t ' style="left:632.30px;top:268.51px;color:#3a3a3a;font-family:'DejaVu Sans Condensed','Liberation Sans',sans-serif;font-size:10px;font-weight:normal;letter-spacing:0.088px;line-height:14px;white-space:nowrap;">Nom (SSID):</span>
<span class='t ' style="left:693.90px;top:268.61px;color:#222;font-family:'DejaVu Sans Condensed','Liberation Sans',sans-serif;font-size:10.3px;font-weight:bold;letter-spacing:-0.193px;line-height:14px;white-space:nowrap;">sc-B658-5GHZ</span>
<span class='t ' style="left:632.30px;top:291.25px;color:#3a3a3a;font-family:'DejaVu Sans Condensed','Liberation Sans',sans-serif;font-size:10px;font-weight:normal;letter-spacing:-0.139px;line-height:14px;white-space:nowrap;">Norme Wi-Fi:</span>
<span class='t ' style="left:691.00px;top:291.45px;color:#222;font-family:'DejaVu Sans Condensed','Liberation Sans',sans-serif;font-size:11px;font-weight:bold;letter-spacing:0.300px;line-height:14px;white-space:nowrap;">a/n/ac</span>
<span class='t ' style="left:632.30px;top:312.25px;color:#3a3a3a;font-family:'DejaVu Sans Condensed','Liberation Sans',sans-serif;font-size:10px;font-weight:normal;letter-spacing:-0.416px;line-height:14px;white-space:nowrap;">Mode:</span>
<span class='t ' style="left:666.50px;top:313.85px;color:#222;font-family:'DejaVu Sans Condensed','Liberation Sans',sans-serif;font-size:10.8px;font-weight:bold;letter-spacing:-0.752px;line-height:14px;white-space:nowrap;">80 MHz</span>
<span class='t ' style="left:632.30px;top:336.15px;color:#3a3a3a;font-family:'DejaVu Sans Condensed','Liberation Sans',sans-serif;font-size:10px;font-weight:normal;letter-spacing:-0.298px;line-height:14px;white-space:nowrap;">Canal d&#x27;émission:</span>
<span class='t ' style="left:715.00px;top:337.65px;color:#222;font-family:'DejaVu Sans Condensed','Liberation Sans',sans-serif;font-size:10.8px;font-weight:bold;letter-spacing:-0.955px;line-height:14px;white-space:nowrap;">Auto</span>
<span class='t ' style="left:756.80px;top:336.15px;color:#3a3a3a;font-family:'DejaVu Sans Condensed','Liberation Sans',sans-serif;font-size:10px;font-weight:normal;letter-spacing:-0.018px;line-height:14px;white-space:nowrap;">Actuel :48 + 52 + 56 + 60</span>
<span class='t ' style="left:646.20px;top:358.75px;color:#3a3a3a;font-family:'DejaVu Sans Condensed','Liberation Sans',sans-serif;font-size:10px;font-weight:normal;letter-spacing:-0.318px;line-height:14px;white-space:nowrap;">Désactiver les canaux DFS</span>
<span class='t ' style="left:632.30px;top:403.39px;color:#222;font-family:'DejaVu Sans Condensed','Liberation Sans',sans-serif;font-size:10.2px;font-weight:bold;letter-spacing:-0.329px;line-height:14px;white-space:nowrap;">Options de sécurité</span>
<span class='t ' style="left:646.60px;top:423.35px;color:#3a3a3a;font-family:'DejaVu Sans Condensed','Liberation Sans',sans-serif;font-size:10px;font-weight:normal;letter-spacing:-0.250px;line-height:14px;white-space:nowrap;">Aucune</span>
<span class='t ' style="left:646.60px;top:445.20px;color:#3a3a3a;font-family:'DejaVu Sans Condensed','Liberation Sans',sans-serif;font-size:10px;font-weight:normal;letter-spacing:0.242px;line-height:14px;white-space:nowrap;">WPA-PSK [TKIP]</span>
<span class='t ' style="left:646.60px;top:467.05px;color:#3a3a3a;font-family:'DejaVu Sans Condensed','Liberation Sans',sans-serif;font-size:10px;font-weight:normal;letter-spacing:0.032px;line-height:14px;white-space:nowrap;">WPA2-PSK [AES]</span>
<span class='t ' style="left:646.60px;top:488.90px;color:#3a3a3a;font-family:'DejaVu Sans Condensed','Liberation Sans',sans-serif;font-size:10px;font-weight:normal;letter-spacing:0.161px;line-height:14px;white-space:nowrap;">WPA-PSK [TKIP] + WPA2-PSK [AES]</span>
<span class='t ' style="left:624.60px;top:535.33px;color:#111;font-family:'DejaVu Sans Condensed','Liberation Sans',sans-serif;font-size:10.2px;font-weight:bold;letter-spacing:-0.108px;line-height:14px;white-space:nowrap;">WPA-PSK [TKIP] + WPA2-PSK [AES]</span>
<span class='t ' style="left:631.30px;top:550.05px;color:#3a3a3a;font-family:'DejaVu Sans Condensed','Liberation Sans',sans-serif;font-size:10px;font-weight:normal;letter-spacing:-0.431px;line-height:14px;white-space:nowrap;">Clé partagée:</span>
<span class='t ' style="left:851.40px;top:550.05px;color:#3a3a3a;font-family:'DejaVu Sans Condensed','Liberation Sans',sans-serif;font-size:10px;font-weight:normal;letter-spacing:-0.229px;line-height:14px;white-space:nowrap;">(8-63 caractères)</span>
<span class='t ' style="left:712.00px;top:563.65px;color:#3a3a3a;font-family:'DejaVu Sans Condensed','Liberation Sans',sans-serif;font-size:10px;font-weight:normal;letter-spacing:-0.182px;line-height:14px;white-space:nowrap;">Afficher le mot de passe</span>
<span class='t ' style="left:302.60px;top:588.25px;color:#111;font-family:'DejaVu Sans Condensed','Liberation Sans',sans-serif;font-size:10.2px;font-weight:bold;letter-spacing:-0.234px;line-height:14px;white-space:nowrap;">Liste d&#x27;accès Wi-Fi 2,4 GHz &amp; 5 GHz</span>
<span class='t ' style="left:311.00px;top:616.85px;color:#222;font-family:'DejaVu Sans Condensed','Liberation Sans',sans-serif;font-size:10px;font-weight:normal;letter-spacing:-0.160px;line-height:14px;white-space:nowrap;">Liste d&#x27;accès Wi-Fi</span>
<span class='t ' style="left:302.30px;top:648.95px;color:#111;font-family:'DejaVu Sans Condensed','Liberation Sans',sans-serif;font-size:10.2px;font-weight:bold;letter-spacing:-0.275px;line-height:14px;white-space:nowrap;">Restaurer les valeurs par défaut du réseau Wi-Fi</span>
<span class='t ' style="left:311.50px;top:676.75px;color:#222;font-family:'DejaVu Sans Condensed','Liberation Sans',sans-serif;font-size:10px;font-weight:normal;letter-spacing:-0.221px;line-height:14px;white-space:nowrap;">Restaurer les valeurs par défaut du réseau Wi-Fi</span>
<span class='t ' style="left:572.90px;top:721.55px;color:#222;font-family:'DejaVu Sans Condensed','Liberation Sans',sans-serif;font-size:10px;font-weight:normal;letter-spacing:-0.292px;line-height:14px;white-space:nowrap;">Appliquer</span>
<span class='t ' style="left:635.20px;top:721.55px;color:#222;font-family:'DejaVu Sans Condensed','Liberation Sans',sans-serif;font-size:10px;font-weight:normal;letter-spacing:-0.300px;line-height:14px;white-space:nowrap;">Annuler</span>
</div>
</body>
</html>
